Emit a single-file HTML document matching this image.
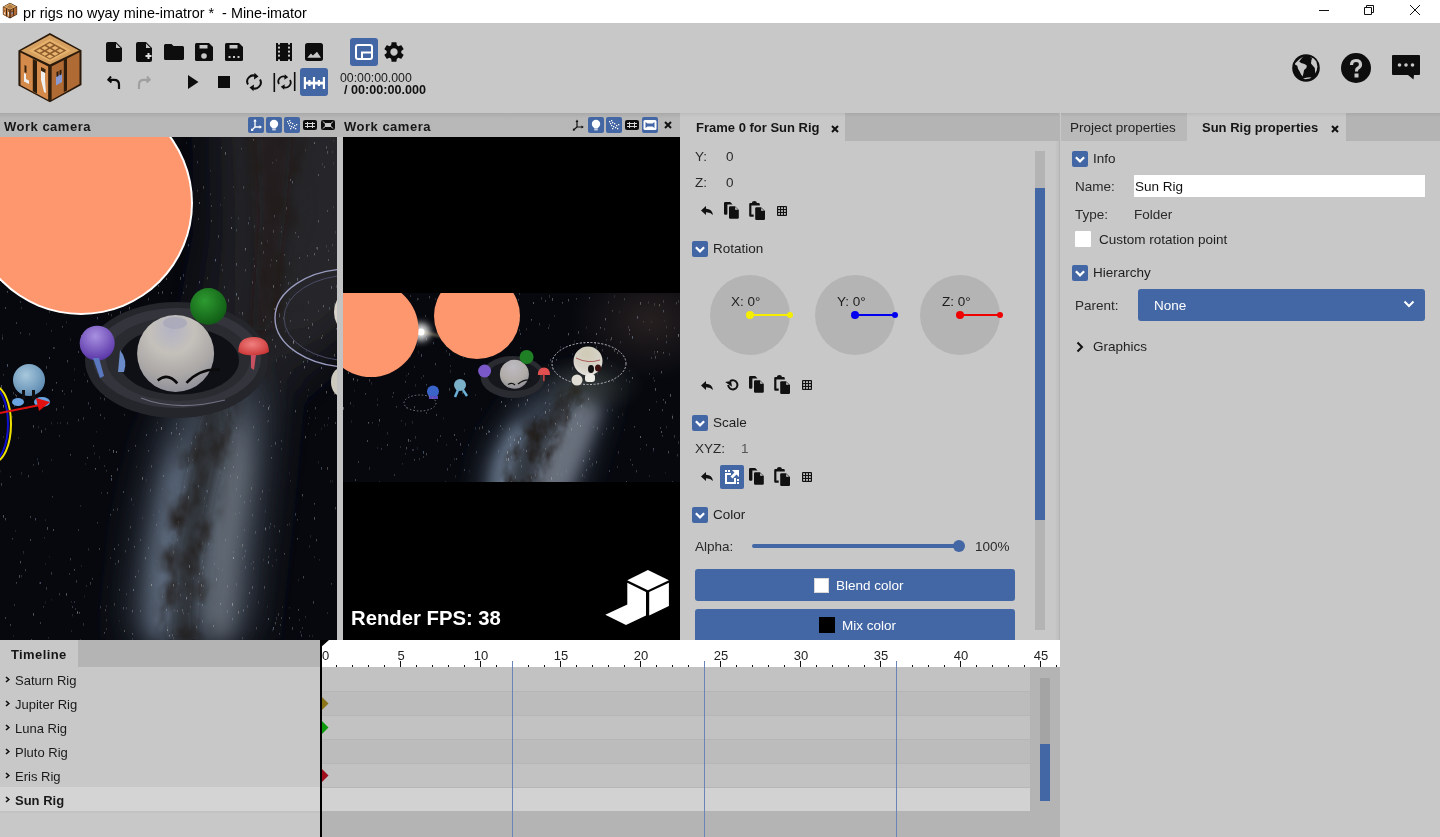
<!DOCTYPE html>
<html><head><meta charset="utf-8">
<style>
*{margin:0;padding:0;box-sizing:border-box}
html,body{width:1440px;height:837px;overflow:hidden;background:#c8c8c8;font-family:"Liberation Sans",sans-serif;color:#1a1a1a}
.a{position:absolute}
.t{position:absolute;white-space:nowrap;will-change:transform}
</style></head><body>
<!-- TITLE BAR -->
<div class="a" style="left:0;top:0;width:1440px;height:23px;background:#fff"></div>
<svg class="a" style="left:2px;top:2px" width="16" height="17" viewBox="15 30 70 75">
 <path d="M49.9 33 L81.5 50.3 L81.5 85 L49.9 102.3 L18.4 85.5 L18.4 50.6Z" fill="#2a1a0c"/>
 <path d="M49.9 35 L79 50.6 L49.9 64.5 L21 50.8Z" fill="#d6a060"/>
 <path d="M49.9 39 L71 50.6 L49.9 61.5 L29 50.8Z" fill="#e6b26c"/>
 <path d="M49.9 41.5 L66.5 50.6 L49.9 59.5 L33.5 50.8Z" fill="#8a5a2c"/>
 <g fill="#e8b46e">
  <path d="M49.9 43 L53.4 45 L49.9 47 L46.4 45Z"/><path d="M55 45.9 L58.5 47.9 L55 49.9 L51.5 47.9Z"/><path d="M60.1 48.8 L63.6 50.8 L60.1 52.8 L56.6 50.8Z"/>
  <path d="M44.8 45.9 L48.3 47.9 L44.8 49.9 L41.3 47.9Z"/><path d="M49.9 48.8 L53.4 50.8 L49.9 52.8 L46.4 50.8Z"/><path d="M55 51.7 L58.5 53.7 L55 55.7 L51.5 53.7Z"/>
  <path d="M39.7 48.8 L43.2 50.8 L39.7 52.8 L36.2 50.8Z"/><path d="M44.8 51.7 L48.3 53.7 L44.8 55.7 L41.3 53.7Z"/><path d="M49.9 54.6 L53.4 56.6 L49.9 58.6 L46.4 56.6Z"/>
 </g>
 <path d="M20.5 52.5 L48.4 66.5 L48.4 100 L20.5 85Z" fill="#d48a4a"/>
 <path d="M51.4 66.5 L79.5 52.2 L79.5 84 L51.4 100Z" fill="#b06a34"/>
 <path d="M32.8 59 L37 61 L37 93.5 L32.8 91.3Z" fill="#2e1c0c"/>
 <path d="M63.8 59.5 L67 58 L67 90.5 L63.8 92Z" fill="#2e1c0c"/>
 <path d="M48.4 65.5 L51.4 65.5 L51.4 101 L48.4 101Z" fill="#2e1c0c"/>
 <path d="M24 73 L26 74 L26 79 L29 80.5 L29 84 L24 81.5Z" fill="#f0f0f0"/>
 <path d="M24.5 65 L26.5 66 L26.5 73 L24.5 72Z" fill="#3a2410"/>
 <path d="M41 70.5 L45 72.5 L45 80 L46 93 L44 92 L41 80Z" fill="#f0f0f0"/>
 <path d="M41 67 L45.5 69.3 L45.5 73 L41 70.7Z" fill="#3a2410"/>
 <path d="M56 76 L62 73 L62 82 L56 85.5Z" fill="#8a9ad0"/>
 <path d="M56.5 72 L58.5 71 L58.5 76 L56.5 77Z M59.5 70.5 L61.5 69.5 L61.5 74.5 L59.5 75.5Z" fill="#2e1c0c"/>
</svg>
<div class="t" style="left:23px;top:4.11px;font-size:14.4px;line-height:18px;color:#000;">pr rigs no wyay mine-imatror *&nbsp; - Mine-imator</div>

<div class="a" style="left:1319px;top:10px;width:10px;height:1px;background:#111"></div>
<svg class="a" style="left:1360px;top:0" width="20" height="20" viewBox="1360 0 20 20"><path d="M1364.5 7.5h7v7h-7z M1366.5 7.5v-2h7v7h-2" fill="none" stroke="#111" stroke-width="1"/></svg>
<svg class="a" style="left:1405px;top:0" width="20" height="20" viewBox="1405 0 20 20"><path d="M1410 5L1420 15M1420 5L1410 15" stroke="#111" stroke-width="1"/></svg>
<!-- TOOLBAR -->
<div class="a" style="left:0;top:23px;width:1440px;height:90px;background:#c8c8c8"></div>
<!-- logo crafting table -->
<svg class="a" style="left:15px;top:30px" width="70" height="75" viewBox="15 30 70 75">
 <path d="M49.9 33 L81.5 50.3 L81.5 85 L49.9 102.3 L18.4 85.5 L18.4 50.6Z" fill="#2a1a0c"/>
 <path d="M49.9 35 L79 50.6 L49.9 64.5 L21 50.8Z" fill="#d6a060"/>
 <path d="M49.9 39 L71 50.6 L49.9 61.5 L29 50.8Z" fill="#e6b26c"/>
 <path d="M49.9 41.5 L66.5 50.6 L49.9 59.5 L33.5 50.8Z" fill="#8a5a2c"/>
 <g fill="#e8b46e">
  <path d="M49.9 43 L53.4 45 L49.9 47 L46.4 45Z"/><path d="M55 45.9 L58.5 47.9 L55 49.9 L51.5 47.9Z"/><path d="M60.1 48.8 L63.6 50.8 L60.1 52.8 L56.6 50.8Z"/>
  <path d="M44.8 45.9 L48.3 47.9 L44.8 49.9 L41.3 47.9Z"/><path d="M49.9 48.8 L53.4 50.8 L49.9 52.8 L46.4 50.8Z"/><path d="M55 51.7 L58.5 53.7 L55 55.7 L51.5 53.7Z"/>
  <path d="M39.7 48.8 L43.2 50.8 L39.7 52.8 L36.2 50.8Z"/><path d="M44.8 51.7 L48.3 53.7 L44.8 55.7 L41.3 53.7Z"/><path d="M49.9 54.6 L53.4 56.6 L49.9 58.6 L46.4 56.6Z"/>
 </g>
 <path d="M20.5 52.5 L48.4 66.5 L48.4 100 L20.5 85Z" fill="#d48a4a"/>
 <path d="M51.4 66.5 L79.5 52.2 L79.5 84 L51.4 100Z" fill="#b06a34"/>
 <path d="M32.8 59 L37 61 L37 93.5 L32.8 91.3Z" fill="#2e1c0c"/>
 <path d="M63.8 59.5 L67 58 L67 90.5 L63.8 92Z" fill="#2e1c0c"/>
 <path d="M48.4 65.5 L51.4 65.5 L51.4 101 L48.4 101Z" fill="#2e1c0c"/>
 <path d="M24 73 L26 74 L26 79 L29 80.5 L29 84 L24 81.5Z" fill="#f0f0f0"/>
 <path d="M24.5 65 L26.5 66 L26.5 73 L24.5 72Z" fill="#3a2410"/>
 <path d="M41 70.5 L45 72.5 L45 80 L46 93 L44 92 L41 80Z" fill="#f0f0f0"/>
 <path d="M41 67 L45.5 69.3 L45.5 73 L41 70.7Z" fill="#3a2410"/>
 <path d="M56 76 L62 73 L62 82 L56 85.5Z" fill="#8a9ad0"/>
 <path d="M56.5 72 L58.5 71 L58.5 76 L56.5 77Z M59.5 70.5 L61.5 69.5 L61.5 74.5 L59.5 75.5Z" fill="#2e1c0c"/>
</svg>
<svg class="a" style="left:106px;top:42px" width="16" height="20" viewBox="0 0 16 20"><path d="M2 0H10L16 6V18Q16 20 14 20H2Q0 20 0 18V2Q0 0 2 0Z" fill="#0d0d0d"/><path d="M10 1.5V6H14.5Z" fill="#c8c8c8"/></svg>
<svg class="a" style="left:136px;top:42px" width="16" height="20" viewBox="0 0 16 20"><path d="M2 0H10L16 6V18Q16 20 14 20H2Q0 20 0 18V2Q0 0 2 0Z" fill="#0d0d0d"/><path d="M10 1.5V6H14.5Z" fill="#c8c8c8"/><path d="M9.5 14h6M12.5 11v6" stroke="#e0e0e0" stroke-width="2"/></svg>
<svg class="a" style="left:164px;top:44px" width="20" height="16" viewBox="0 0 20 16"><path d="M1.5 0H7.5L9.5 2H18.5Q20 2 20 3.5V14.5Q20 16 18.5 16H1.5Q0 16 0 14.5V1.5Q0 0 1.5 0Z" fill="#0d0d0d"/></svg>
<svg class="a" style="left:195px;top:43px" width="18" height="18" viewBox="0 0 18 18"><path d="M1.5 0H14L18 4V16.5Q18 18 16.5 18H1.5Q0 18 0 16.5V1.5Q0 0 1.5 0Z" fill="#0d0d0d"/><rect x="4.5" y="2" width="8" height="3.5" fill="#c8c8c8"/><circle cx="9" cy="13" r="2.8" fill="#c8c8c8"/></svg>
<svg class="a" style="left:225px;top:43px" width="18" height="18" viewBox="0 0 18 18"><path d="M1.5 0H14L18 4V16.5Q18 18 16.5 18H1.5Q0 18 0 16.5V1.5Q0 0 1.5 0Z" fill="#0d0d0d"/><rect x="4.5" y="2" width="8" height="3.5" fill="#c8c8c8"/><rect x="3.5" y="13" width="2" height="2" fill="#c8c8c8"/><rect x="8" y="13" width="2" height="2" fill="#c8c8c8"/><rect x="12.5" y="13" width="2" height="2" fill="#c8c8c8"/></svg>
<svg class="a" style="left:276px;top:43px" width="16" height="18" viewBox="0 0 16 18"><rect x="0" y="0" width="16" height="18" fill="#0d0d0d"/><g fill="#c8c8c8"><rect x="2" y="0" width="2" height="1.6"/><rect x="2" y="3.6" width="2" height="2"/><rect x="2" y="7.6" width="2" height="2"/><rect x="2" y="11.6" width="2" height="2"/><rect x="2" y="16.4" width="2" height="1.6"/><rect x="12" y="0" width="2" height="1.6"/><rect x="12" y="3.6" width="2" height="2"/><rect x="12" y="7.6" width="2" height="2"/><rect x="12" y="11.6" width="2" height="2"/><rect x="12" y="16.4" width="2" height="1.6"/></g></svg>
<svg class="a" style="left:305px;top:43px" width="18" height="18" viewBox="305 43 18 18"><rect x="305" y="43" width="18" height="18" rx="2.5" fill="#0d0d0d"/><path d="M307.3 57.7L310.9 53.6L312.9 55.6L317 51.8L321 57.7Z" fill="#c8c8c8"/></svg>
<div class="a" style="left:350px;top:38px;width:28px;height:28px;background:#4366a4;border-radius:3px"></div>
<svg class="a" style="left:355px;top:44px" width="18" height="16" viewBox="0 0 18 16"><rect x="1" y="1" width="16" height="14" rx="2" fill="none" stroke="#fff" stroke-width="2"/><path d="M7 15V8.5H17" fill="none" stroke="#fff" stroke-width="2"/></svg>
<svg class="a" style="left:384px;top:42px" width="20" height="20" viewBox="2.2 2.2 19.6 19.6"><path fill="#0d0d0d" d="M19.14 12.94c.04-.3.06-.61.06-.94 0-.32-.02-.64-.07-.94l2.03-1.58c.18-.14.23-.41.12-.61l-1.92-3.32c-.12-.22-.37-.29-.59-.22l-2.39.96c-.5-.38-1.03-.7-1.62-.94l-.36-2.54c-.04-.24-.24-.41-.48-.41h-3.84c-.24 0-.43.17-.47.41l-.36 2.54c-.59.24-1.13.57-1.62.94l-2.39-.96c-.22-.08-.47 0-.59.22L2.74 8.87c-.12.21-.08.47.12.61l2.03 1.58c-.05.3-.09.63-.09.94s.02.64.07.94l-2.03 1.58c-.18.14-.23.41-.12.61l1.92 3.32c.12.22.37.29.59.22l2.39-.96c.5.38 1.03.7 1.62.94l.36 2.54c.05.24.24.41.48.41h3.84c.24 0 .44-.17.47-.41l.36-2.54c.59-.24 1.13-.56 1.62-.94l2.39.96c.22.08.47 0 .59-.22l1.92-3.32c.12-.22.07-.47-.12-.61l-2.01-1.58zM12 15.6c-1.98 0-3.6-1.62-3.6-3.6s1.62-3.6 3.6-3.6 3.6 1.62 3.6 3.6-1.62 3.6-3.6 3.6z"/></svg>
<!-- row 2 -->
<svg class="a" style="left:107px;top:75px" width="14" height="15" viewBox="0 0 14 15"><path d="M4 1.5L1.2 4.8L4.5 7.5" fill="none" stroke="#0d0d0d" stroke-width="2"/><path d="M1.5 4.8H7Q12 4.8 12 9.5V14" fill="none" stroke="#0d0d0d" stroke-width="2.2"/></svg>
<svg class="a" style="left:137px;top:75px" width="14" height="15" viewBox="0 0 14 15"><path d="M10 1.5L12.8 4.8L9.5 7.5" fill="none" stroke="#a0a0a0" stroke-width="2"/><path d="M12.5 4.8H7Q2 4.8 2 9.5V14" fill="none" stroke="#a0a0a0" stroke-width="2.2"/></svg>
<svg class="a" style="left:188px;top:75px" width="11" height="14" viewBox="0 0 11 14"><path d="M0 0L10.5 7L0 14Z" fill="#0d0d0d"/></svg>
<div class="a" style="left:218px;top:76px;width:12px;height:12px;background:#0d0d0d"></div>
<svg class="a" style="left:245px;top:72px" width="18" height="20" viewBox="0 0 18 20"><path d="M3 12.5A6 6 0 0 1 11 4.2" fill="none" stroke="#0d0d0d" stroke-width="2"/><path d="M9.5 0.8L13.5 4.5L9 7.5Z" fill="#0d0d0d"/><path d="M15 7.5A6 6 0 0 1 7 15.8" fill="none" stroke="#0d0d0d" stroke-width="2"/><path d="M8.5 19.2L4.5 15.5L9 12.5Z" fill="#0d0d0d"/></svg>
<svg class="a" style="left:273px;top:72px" width="23" height="20" viewBox="0 0 23 20"><rect x="0.5" y="1" width="1.6" height="19" fill="#0d0d0d"/><rect x="20.9" y="0" width="1.6" height="19" fill="#0d0d0d"/><path d="M6 12A5 5 0 0 1 13 5.3" fill="none" stroke="#0d0d0d" stroke-width="1.8"/><path d="M11.8 2.3L15.2 5.3L11.3 7.8Z" fill="#0d0d0d"/><path d="M17 8A5 5 0 0 1 10 14.7" fill="none" stroke="#0d0d0d" stroke-width="1.8"/><path d="M11.2 17.7L7.8 14.7L11.7 12.2Z" fill="#0d0d0d"/></svg>
<div class="a" style="left:300px;top:68px;width:28px;height:28px;background:#4366a4;border-radius:3px"></div>
<svg class="a" style="left:300px;top:68px" width="28" height="28" viewBox="300 68 28 28"><g fill="#fff"><rect x="303.8" y="77" width="2.2" height="12"/><rect x="322.8" y="77" width="2.2" height="12"/><rect x="312.9" y="77" width="2.2" height="12"/><rect x="308.3" y="80" width="2.2" height="6"/><rect x="317.8" y="80" width="2.2" height="6"/><rect x="304" y="81.7" width="21" height="2.8"/></g></svg>
<div class="t" style="left:340px;top:70.74px;font-size:12.3px;line-height:15px;color:#1a1a1a;">00:00:00.000</div>

<div class="t" style="left:344px;top:82.33px;font-size:12.6px;line-height:16px;font-weight:bold;color:#111;">/ 00:00:00.000</div>

<!-- right icons -->
<svg class="a" style="left:1290px;top:52px" width="32" height="32" viewBox="0 0 32 32"><circle cx="16" cy="16" r="13.8" fill="#0d0d0d"/><g fill="#c8c8c8"><path d="M5.4 11.1L9.6 6.9L13.4 4.4L11.5 6.5L9.2 9.6L11.1 11.1L14.5 11.9L16.8 13.4L16.4 16.1L14.1 18L13.4 21.4L12.6 24.5L11.1 22.6L9.9 19.9L8 16.8L7.3 13.8L5 12.4Q4.8 11.8 5.4 11.1Z"/><path d="M19.9 4.9L22.2 6.5L21.4 8L21 11.5L22.9 13.8L24.8 16.1L25.2 21.4L26.8 18.3L27.4 14.5L26.4 9.6L23.7 6.5Z"/><path d="M13 26.6L17.2 25.6L21.4 25.2L19.9 26.6L15.3 27.3Z"/></g></svg>
<svg class="a" style="left:1341px;top:53px" width="30" height="30" viewBox="0 0 30 30"><circle cx="15" cy="15" r="15" fill="#0d0d0d"/><path d="M10.5 12Q10.5 7.5 15 7.5Q19.5 7.5 19.5 11.5Q19.5 14 16.5 15.5Q15.5 16 15.5 18.5" fill="none" stroke="#c8c8c8" stroke-width="3.2"/><rect x="13.5" y="20.5" width="4" height="4" fill="#c8c8c8"/></svg>
<svg class="a" style="left:1392px;top:55px" width="28" height="25" viewBox="0 0 28 25"><path d="M1 0H27Q28 0 28 1V19Q28 20 27 20H22L21.5 24.5L16 20H1Q0 20 0 19V1Q0 0 1 0Z" fill="#0d0d0d"/><circle cx="7.5" cy="10" r="1.8" fill="#c8c8c8"/><circle cx="14" cy="10" r="1.8" fill="#c8c8c8"/><circle cx="20.5" cy="10" r="1.8" fill="#c8c8c8"/></svg>
<!-- PANEL HEADERS -->
<div class="a" style="left:0;top:113px;width:680px;height:24px;background:linear-gradient(#a9a9a9,#b7b7b7 5px,#b8b8b8)"></div>
<div class="t" style="left:4.2px;top:119.10px;font-size:13px;line-height:16px;font-weight:bold;letter-spacing:0.5px;color:#161616;">Work camera</div>

<div class="t" style="left:344px;top:119.10px;font-size:13px;line-height:16px;font-weight:bold;letter-spacing:0.5px;color:#161616;">Work camera</div>

<!-- vp1 header icons -->
<div class="a" style="left:248px;top:117px;width:16px;height:16px;background:#4366a4;border-radius:2px"></div>
<svg class="a" style="left:248px;top:117px" width="16" height="16" viewBox="0 0 16 16"><path d="M7 3V10H13M7 10L3.5 13.5" stroke="#fff" stroke-width="1.3" fill="none"/><path d="M7 2L5.3 4.5H8.7Z M14 10L11.5 8.3V11.7Z M3 14L3.3 11.3L5.7 13.7Z" fill="#fff"/></svg>
<div class="a" style="left:266px;top:117px;width:16px;height:16px;background:#4366a4;border-radius:2px"></div>
<svg class="a" style="left:266px;top:117px" width="16" height="16" viewBox="0 0 16 16"><circle cx="8" cy="7" r="4.2" fill="#fff"/><rect x="6.2" y="9" width="3.6" height="2.5" fill="#fff"/><rect x="6.2" y="12.3" width="3.6" height="1" fill="#fff"/></svg>
<div class="a" style="left:284px;top:117px;width:16px;height:16px;background:#4366a4;border-radius:2px"></div>
<svg class="a" style="left:284px;top:117px" width="16" height="16" viewBox="0 0 16 16"><g fill="#fff"><rect x="3" y="4" width="1.3" height="1.3"/><rect x="5" y="3" width="1.3" height="1.3"/><rect x="4" y="6" width="1.3" height="1.3"/><rect x="6" y="5" width="1.3" height="1.3"/><rect x="8" y="6" width="1.3" height="1.3"/><rect x="5" y="8" width="1.3" height="1.3"/><rect x="7" y="9" width="1.3" height="1.3"/><rect x="10" y="8" width="1.3" height="1.3"/><rect x="9" y="10" width="1.3" height="1.3"/><rect x="11" y="11" width="1.3" height="1.3"/><rect x="6" y="11" width="1.3" height="1.3"/><rect x="12" y="7" width="1.3" height="1.3"/></g></svg>
<svg class="a" style="left:303px;top:119px" width="15" height="12" viewBox="0 0 15 12"><rect x="0" y="1" width="14" height="10" rx="2" fill="#0d0d0d"/><path d="M4.5 3V9M9.5 3V9M2 4.5H12M2 7.5H12" stroke="#d8d8d8" stroke-width="1"/></svg>
<svg class="a" style="left:321px;top:119px" width="15" height="12" viewBox="0 0 15 12"><rect x="0" y="1" width="14" height="10" rx="2" fill="#0d0d0d"/><path d="M1.8 2.6L4 4.2M12.2 2.6L10 4.2M1.8 9.4L4 7.8M12.2 9.4L10 7.8" stroke="#d0d0d0" stroke-width="0.9"/><path d="M3.6 4H10.4Q9.6 6 10.4 8H3.6Q4.4 6 3.6 4Z" fill="#c8c8c8"/></svg>
<!-- vp2 header icons -->
<svg class="a" style="left:572px;top:119px" width="12" height="12" viewBox="0 0 12 12"><path d="M5 2V8H11M5 8L1.5 11" stroke="#111" stroke-width="1.2" fill="none"/><path d="M5 0.5L3.5 3H6.5Z M11.8 8L9.5 6.5V9.5Z M0.8 11.8L1 9.3L3.3 11.3Z" fill="#111"/></svg>
<div class="a" style="left:588px;top:117px;width:16px;height:16px;background:#4366a4;border-radius:2px"></div>
<svg class="a" style="left:588px;top:117px" width="16" height="16" viewBox="0 0 16 16"><circle cx="8" cy="7" r="4.2" fill="#fff"/><rect x="6.2" y="9" width="3.6" height="2.5" fill="#fff"/><rect x="6.2" y="12.3" width="3.6" height="1" fill="#fff"/></svg>
<div class="a" style="left:606px;top:117px;width:16px;height:16px;background:#4366a4;border-radius:2px"></div>
<svg class="a" style="left:606px;top:117px" width="16" height="16" viewBox="0 0 16 16"><g fill="#fff"><rect x="3" y="4" width="1.3" height="1.3"/><rect x="5" y="3" width="1.3" height="1.3"/><rect x="4" y="6" width="1.3" height="1.3"/><rect x="6" y="5" width="1.3" height="1.3"/><rect x="8" y="6" width="1.3" height="1.3"/><rect x="5" y="8" width="1.3" height="1.3"/><rect x="7" y="9" width="1.3" height="1.3"/><rect x="10" y="8" width="1.3" height="1.3"/><rect x="9" y="10" width="1.3" height="1.3"/><rect x="11" y="11" width="1.3" height="1.3"/><rect x="6" y="11" width="1.3" height="1.3"/><rect x="12" y="7" width="1.3" height="1.3"/></g></svg>
<svg class="a" style="left:625px;top:119px" width="15" height="12" viewBox="0 0 15 12"><rect x="0" y="1" width="14" height="10" rx="2" fill="#0d0d0d"/><path d="M4.5 3V9M9.5 3V9M2 4.5H12M2 7.5H12" stroke="#d8d8d8" stroke-width="1"/></svg>
<div class="a" style="left:642px;top:117px;width:16px;height:16px;background:#4366a4;border-radius:2px"></div>
<svg class="a" style="left:642px;top:117px" width="16" height="16" viewBox="0 0 16 16"><rect x="1.5" y="3" width="13" height="10" rx="1.5" fill="#fff"/><path d="M3.5 5L5.5 6.5H10.5L12.5 5V11L10.5 9.5H5.5L3.5 11Z" fill="#4366a4"/></svg>
<svg class="a" style="left:664px;top:121px" width="8" height="8" viewBox="0 0 8 8"><path d="M1 1L7 7M7 1L1 7" stroke="#111" stroke-width="2"/></svg>
<!-- divider -->
<div class="a" style="left:337px;top:137px;width:6px;height:503px;background:#c3c3c3"></div>

<!-- VIEWPORT 1 -->
<div class="a" style="left:0;top:137px;width:337px;height:503px;overflow:hidden;background:#06080e">
<svg width="337" height="503" viewBox="0 137 337 503">
 <defs>
  <filter id="b24" filterUnits="userSpaceOnUse" x="-200" y="0" width="1100" height="900"><feGaussianBlur stdDeviation="22"/></filter>
  <filter id="b12" filterUnits="userSpaceOnUse" x="-200" y="0" width="1100" height="900"><feGaussianBlur stdDeviation="11"/></filter>
  <filter id="dust1" color-interpolation-filters="sRGB" filterUnits="userSpaceOnUse" x="0" y="100" width="400" height="560"><feGaussianBlur in="SourceGraphic" stdDeviation="7" result="m"/><feTurbulence type="fractalNoise" baseFrequency="0.045 0.03" numOctaves="3" seed="4" result="n"/><feColorMatrix in="n" type="matrix" values="0 0 0 0 0.13 0 0 0 0 0.11 0 0 0 0 0.10 0 0 0 2.3 -0.9" result="d"/><feComposite in="d" in2="m" operator="in"/></filter>
  <filter id="b6" filterUnits="userSpaceOnUse" x="-200" y="0" width="1100" height="900"><feGaussianBlur stdDeviation="6"/></filter>
  <radialGradient id="sat" cx="45%" cy="20%" r="85%"><stop offset="0" stop-color="#b4b4c4"/><stop offset="0.35" stop-color="#c4c0ba"/><stop offset="0.7" stop-color="#aaa7a6"/><stop offset="1" stop-color="#8a8a96"/></radialGradient>
  <radialGradient id="grn" cx="40%" cy="35%" r="70%"><stop offset="0" stop-color="#2e9a30"/><stop offset="1" stop-color="#0f5a14"/></radialGradient>
  <radialGradient id="pur" cx="45%" cy="30%" r="70%"><stop offset="0" stop-color="#a890e0"/><stop offset="1" stop-color="#5a36a8"/></radialGradient>
  <radialGradient id="red" cx="45%" cy="40%" r="70%"><stop offset="0" stop-color="#f08080"/><stop offset="1" stop-color="#c83030"/></radialGradient>
  <radialGradient id="lbl" cx="40%" cy="35%" r="70%"><stop offset="0" stop-color="#a8c8dc"/><stop offset="1" stop-color="#5a88b0"/></radialGradient>
 </defs>
 <!-- milky way -->
 <g filter="url(#b24)">
  <path d="M215 60 L380 60 L380 300 L280 400 L255 639 L125 639 L150 480 L195 330 L215 230Z" fill="#1c1e24"/>
  <path d="M225 90 L380 90 L380 300 L320 350 L250 340 L235 220Z" fill="#26282b"/>
  <path d="M140 639 L150 520 L172 430 L212 385 L258 395 L250 500 L236 639Z" fill="#46515f"/>
 </g>
 <g filter="url(#b12)">
  <path d="M148 639 L152 560 L166 480 L180 440 L188 470 L180 560 L176 639Z" fill="#6a7a90" opacity="0.8"/>
  <path d="M205 639 L210 540 L225 450 L245 410 L250 470 L238 560 L232 639Z" fill="#707882" opacity="0.75"/>
 </g>
 <g filter="url(#b6)">
  <path d="M170 639 L174 560 L188 480 L204 420 L222 380 L226 430 L210 500 L196 580 L194 639Z" fill="#201c1c" opacity="0.6"/>
  <path d="M255 90 L295 90 L285 220 L270 330 L252 330 L260 220Z" fill="#221818" opacity="0.5"/>
 </g>
 <g filter="url(#dust1)">
  <path d="M158 639 L162 560 L176 480 L196 410 L225 370 L240 400 L222 480 L208 560 L206 639Z" fill="#000"/>
  <path d="M240 90 L310 90 L300 220 L285 340 L245 340 L250 220Z" fill="#000"/>
 </g>
 <rect x="45" y="563" width="1" height="1.6" fill="rgb(118,134,158)" opacity="0.19"/><rect x="151" y="465" width="1" height="2.8" fill="rgb(176,176,176)" opacity="0.28"/><rect x="282" y="355" width="1" height="2.4" fill="rgb(150,142,135)" opacity="0.23"/><rect x="77" y="612" width="1" height="1.6" fill="rgb(190,190,190)" opacity="0.30"/><rect x="182" y="609" width="1" height="2.8" fill="rgb(158,174,198)" opacity="0.31"/><rect x="178" y="521" width="1" height="2.4" fill="rgb(170,187,213)" opacity="0.14"/><rect x="74" y="368" width="1" height="2.8" fill="rgb(187,187,187)" opacity="0.12"/><rect x="188" y="460" width="1" height="1.6" fill="rgb(129,147,173)" opacity="0.37"/><rect x="302" y="627" width="1" height="2.0" fill="rgb(214,203,192)" opacity="0.20"/><rect x="198" y="581" width="1" height="1.6" fill="rgb(214,203,192)" opacity="0.19"/><rect x="251" y="340" width="1" height="2.4" fill="rgb(188,206,235)" opacity="0.42"/><rect x="237" y="476" width="1" height="2.8" fill="rgb(197,197,197)" opacity="0.26"/><rect x="36" y="219" width="1" height="2.8" fill="rgb(150,170,200)" opacity="0.37"/><rect x="158" y="292" width="1" height="2.0" fill="rgb(228,216,205)" opacity="0.26"/><rect x="76" y="143" width="1" height="2.8" fill="rgb(140,154,175)" opacity="0.31"/><rect x="321" y="428" width="1" height="1.6" fill="rgb(156,176,208)" opacity="0.17"/><rect x="289" y="617" width="1" height="2.0" fill="rgb(172,189,215)" opacity="0.31"/><rect x="19" y="575" width="1" height="2.8" fill="rgb(177,195,222)" opacity="0.38"/><rect x="120" y="311" width="1" height="2.8" fill="rgb(163,185,218)" opacity="0.28"/><rect x="271" y="457" width="1" height="1.6" fill="rgb(176,193,220)" opacity="0.34"/><rect x="269" y="548" width="1" height="1.6" fill="rgb(182,182,182)" opacity="0.32"/><rect x="6" y="144" width="1" height="2.4" fill="rgb(148,162,185)" opacity="0.14"/><rect x="211" y="310" width="1" height="2.0" fill="rgb(126,139,158)" opacity="0.35"/><rect x="321" y="467" width="1" height="2.8" fill="rgb(174,197,232)" opacity="0.30"/><rect x="167" y="194" width="1" height="2.4" fill="rgb(189,179,170)" opacity="0.21"/><rect x="63" y="192" width="1" height="2.8" fill="rgb(172,189,215)" opacity="0.13"/><rect x="7" y="146" width="1" height="2.0" fill="rgb(168,168,168)" opacity="0.38"/><rect x="171" y="352" width="1" height="2.0" fill="rgb(178,169,160)" opacity="0.26"/><rect x="10" y="476" width="1" height="1.6" fill="rgb(191,181,171)" opacity="0.34"/><rect x="42" y="244" width="1" height="1.6" fill="rgb(117,132,156)" opacity="0.38"/><rect x="105" y="609" width="1" height="2.4" fill="rgb(170,161,153)" opacity="0.33"/><rect x="189" y="565" width="1" height="2.8" fill="rgb(180,198,225)" opacity="0.40"/><rect x="292" y="627" width="1" height="2.8" fill="rgb(240,240,240)" opacity="0.24"/><rect x="33" y="425" width="1" height="2.8" fill="rgb(164,180,205)" opacity="0.36"/><rect x="224" y="286" width="1" height="2.4" fill="rgb(213,213,213)" opacity="0.25"/><rect x="136" y="279" width="1" height="2.4" fill="rgb(136,149,170)" opacity="0.40"/><rect x="190" y="205" width="1" height="2.4" fill="rgb(163,179,204)" opacity="0.38"/><rect x="282" y="606" width="1" height="2.0" fill="rgb(194,184,174)" opacity="0.15"/><rect x="14" y="204" width="1" height="2.4" fill="rgb(136,150,171)" opacity="0.16"/><rect x="202" y="560" width="1" height="2.4" fill="rgb(147,167,197)" opacity="0.19"/><rect x="79" y="612" width="1" height="1.6" fill="rgb(169,186,212)" opacity="0.41"/><rect x="137" y="328" width="1" height="2.4" fill="rgb(134,147,168)" opacity="0.25"/><rect x="198" y="603" width="1" height="1.6" fill="rgb(127,139,159)" opacity="0.31"/><rect x="123" y="286" width="1" height="2.8" fill="rgb(218,218,218)" opacity="0.21"/><rect x="36" y="160" width="1" height="1.6" fill="rgb(187,187,187)" opacity="0.27"/><rect x="39" y="582" width="1" height="2.0" fill="rgb(124,136,155)" opacity="0.24"/><rect x="198" y="218" width="1" height="2.0" fill="rgb(165,182,207)" opacity="0.23"/><rect x="285" y="356" width="1" height="2.4" fill="rgb(148,168,198)" opacity="0.30"/><rect x="106" y="241" width="1" height="1.6" fill="rgb(190,190,190)" opacity="0.30"/><rect x="331" y="286" width="1" height="2.8" fill="rgb(169,192,226)" opacity="0.39"/><rect x="134" y="169" width="1" height="1.6" fill="rgb(190,180,171)" opacity="0.32"/><rect x="265" y="528" width="1" height="2.4" fill="rgb(219,208,197)" opacity="0.40"/><rect x="183" y="292" width="1" height="1.6" fill="rgb(135,153,181)" opacity="0.38"/><rect x="30" y="516" width="1" height="2.0" fill="rgb(120,136,161)" opacity="0.42"/><rect x="103" y="302" width="1" height="2.0" fill="rgb(142,161,190)" opacity="0.32"/><rect x="183" y="428" width="1" height="2.0" fill="rgb(226,226,226)" opacity="0.17"/><rect x="272" y="339" width="1" height="1.6" fill="rgb(184,184,184)" opacity="0.38"/><rect x="3" y="515" width="1" height="2.8" fill="rgb(195,185,175)" opacity="0.41"/><rect x="52" y="389" width="1" height="2.0" fill="rgb(191,191,191)" opacity="0.39"/><rect x="50" y="208" width="1" height="1.6" fill="rgb(142,161,190)" opacity="0.29"/><rect x="281" y="440" width="1" height="2.0" fill="rgb(132,146,166)" opacity="0.33"/><rect x="244" y="529" width="1" height="2.0" fill="rgb(183,201,229)" opacity="0.18"/><rect x="181" y="161" width="1" height="2.4" fill="rgb(188,206,235)" opacity="0.37"/><rect x="230" y="362" width="1" height="2.8" fill="rgb(153,174,205)" opacity="0.29"/><rect x="153" y="336" width="1" height="2.4" fill="rgb(154,169,193)" opacity="0.21"/><rect x="267" y="606" width="1" height="1.6" fill="rgb(223,223,223)" opacity="0.14"/><rect x="195" y="436" width="1" height="2.4" fill="rgb(125,141,167)" opacity="0.38"/><rect x="135" y="445" width="1" height="1.6" fill="rgb(179,170,161)" opacity="0.42"/><rect x="107" y="586" width="1" height="2.0" fill="rgb(164,181,206)" opacity="0.15"/><rect x="232" y="618" width="1" height="2.4" fill="rgb(151,171,202)" opacity="0.36"/><rect x="74" y="601" width="1" height="2.0" fill="rgb(161,182,215)" opacity="0.24"/><rect x="267" y="240" width="1" height="2.4" fill="rgb(141,159,188)" opacity="0.17"/><rect x="236" y="371" width="1" height="2.8" fill="rgb(160,160,160)" opacity="0.21"/><rect x="84" y="246" width="1" height="2.8" fill="rgb(222,222,222)" opacity="0.35"/><rect x="242" y="312" width="1" height="1.6" fill="rgb(172,189,215)" opacity="0.38"/><rect x="30" y="265" width="1" height="1.6" fill="rgb(121,137,162)" opacity="0.13"/><rect x="47" y="527" width="1" height="2.8" fill="rgb(234,234,234)" opacity="0.30"/><rect x="81" y="565" width="1" height="2.0" fill="rgb(205,194,184)" opacity="0.13"/><rect x="148" y="450" width="1" height="1.6" fill="rgb(169,186,212)" opacity="0.34"/><rect x="180" y="594" width="1" height="2.4" fill="rgb(175,198,234)" opacity="0.22"/><rect x="253" y="139" width="1" height="1.6" fill="rgb(174,165,156)" opacity="0.38"/><rect x="328" y="259" width="1" height="2.0" fill="rgb(146,161,183)" opacity="0.41"/><rect x="183" y="274" width="1" height="2.8" fill="rgb(168,190,224)" opacity="0.27"/><rect x="273" y="627" width="1" height="2.8" fill="rgb(164,186,219)" opacity="0.42"/><rect x="41" y="242" width="1" height="2.4" fill="rgb(159,175,199)" opacity="0.21"/><rect x="305" y="149" width="1" height="2.4" fill="rgb(222,222,222)" opacity="0.14"/><rect x="256" y="627" width="1" height="2.4" fill="rgb(167,167,167)" opacity="0.30"/><rect x="105" y="390" width="1" height="1.6" fill="rgb(146,165,195)" opacity="0.13"/><rect x="242" y="313" width="1" height="2.4" fill="rgb(219,208,197)" opacity="0.18"/><rect x="230" y="385" width="1" height="2.8" fill="rgb(232,220,208)" opacity="0.24"/><rect x="1" y="277" width="1" height="2.8" fill="rgb(180,198,226)" opacity="0.30"/><rect x="174" y="609" width="1" height="2.8" fill="rgb(151,166,189)" opacity="0.17"/><rect x="179" y="318" width="1" height="2.8" fill="rgb(150,142,135)" opacity="0.13"/><rect x="113" y="450" width="1" height="2.8" fill="rgb(239,239,239)" opacity="0.38"/><rect x="83" y="623" width="1" height="2.8" fill="rgb(187,187,187)" opacity="0.21"/><rect x="53" y="529" width="1" height="2.0" fill="rgb(150,170,200)" opacity="0.41"/><rect x="275" y="442" width="1" height="2.8" fill="rgb(145,164,194)" opacity="0.39"/><rect x="183" y="213" width="1" height="2.0" fill="rgb(183,173,164)" opacity="0.23"/><rect x="15" y="394" width="1" height="1.6" fill="rgb(225,213,202)" opacity="0.26"/><rect x="221" y="147" width="1" height="1.6" fill="rgb(171,188,214)" opacity="0.28"/><rect x="232" y="441" width="1" height="2.0" fill="rgb(140,154,176)" opacity="0.31"/><rect x="91" y="175" width="1" height="2.8" fill="rgb(162,183,216)" opacity="0.30"/><rect x="248" y="222" width="1" height="2.4" fill="rgb(174,198,233)" opacity="0.29"/><rect x="78" y="419" width="1" height="2.4" fill="rgb(172,163,154)" opacity="0.31"/><rect x="111" y="249" width="1" height="1.6" fill="rgb(182,200,228)" opacity="0.40"/><rect x="293" y="340" width="1" height="2.4" fill="rgb(164,180,205)" opacity="0.27"/><rect x="211" y="220" width="1" height="2.0" fill="rgb(224,212,201)" opacity="0.25"/><rect x="88" y="402" width="1" height="2.8" fill="rgb(133,146,167)" opacity="0.34"/><rect x="253" y="258" width="1" height="1.6" fill="rgb(132,149,176)" opacity="0.19"/><rect x="134" y="385" width="1" height="1.6" fill="rgb(129,142,162)" opacity="0.21"/><rect x="201" y="584" width="1" height="2.8" fill="rgb(177,177,177)" opacity="0.41"/><rect x="275" y="622" width="1" height="2.4" fill="rgb(228,216,205)" opacity="0.28"/><rect x="93" y="445" width="1" height="2.0" fill="rgb(172,172,172)" opacity="0.28"/><rect x="167" y="327" width="1" height="2.0" fill="rgb(136,150,171)" opacity="0.12"/><rect x="156" y="429" width="1" height="2.4" fill="rgb(177,168,159)" opacity="0.24"/><rect x="200" y="594" width="1" height="1.6" fill="rgb(160,160,160)" opacity="0.29"/><rect x="289" y="298" width="1" height="2.0" fill="rgb(149,169,199)" opacity="0.13"/><rect x="297" y="519" width="1" height="1.6" fill="rgb(169,169,169)" opacity="0.30"/><rect x="295" y="410" width="1" height="2.4" fill="rgb(222,210,199)" opacity="0.31"/><rect x="156" y="560" width="1" height="1.6" fill="rgb(151,151,151)" opacity="0.14"/><rect x="43" y="606" width="1" height="1.6" fill="rgb(165,156,148)" opacity="0.31"/><rect x="168" y="203" width="1" height="2.8" fill="rgb(148,162,185)" opacity="0.26"/><rect x="213" y="625" width="1" height="2.0" fill="rgb(185,204,232)" opacity="0.32"/><rect x="315" y="434" width="1" height="1.6" fill="rgb(194,184,174)" opacity="0.23"/><rect x="184" y="408" width="1" height="1.6" fill="rgb(218,207,196)" opacity="0.33"/><rect x="250" y="500" width="1" height="2.0" fill="rgb(119,135,159)" opacity="0.34"/><rect x="51" y="599" width="1" height="1.6" fill="rgb(204,204,204)" opacity="0.13"/><rect x="307" y="395" width="1" height="1.6" fill="rgb(160,181,214)" opacity="0.14"/><rect x="14" y="404" width="1" height="2.8" fill="rgb(164,181,206)" opacity="0.32"/><rect x="303" y="361" width="1" height="1.6" fill="rgb(162,184,217)" opacity="0.41"/><rect x="110" y="289" width="1" height="2.4" fill="rgb(199,199,199)" opacity="0.20"/><rect x="44" y="537" width="1" height="1.6" fill="rgb(123,139,164)" opacity="0.26"/><rect x="83" y="417" width="1" height="2.8" fill="rgb(144,163,192)" opacity="0.30"/><rect x="197" y="190" width="1" height="1.6" fill="rgb(233,221,209)" opacity="0.22"/><rect x="280" y="284" width="1" height="2.4" fill="rgb(136,149,170)" opacity="0.23"/><rect x="109" y="343" width="1" height="1.6" fill="rgb(166,166,166)" opacity="0.21"/><rect x="269" y="405" width="1" height="2.4" fill="rgb(152,172,203)" opacity="0.23"/><rect x="110" y="514" width="1" height="1.6" fill="rgb(214,214,214)" opacity="0.30"/><rect x="308" y="301" width="1" height="2.8" fill="rgb(191,191,191)" opacity="0.21"/><rect x="162" y="596" width="1" height="1.6" fill="rgb(198,198,198)" opacity="0.23"/><rect x="176" y="427" width="1" height="2.4" fill="rgb(145,160,182)" opacity="0.35"/><rect x="318" y="461" width="1" height="2.8" fill="rgb(150,170,201)" opacity="0.13"/><rect x="115" y="392" width="1" height="2.4" fill="rgb(122,134,153)" opacity="0.29"/><rect x="190" y="593" width="1" height="1.6" fill="rgb(173,164,155)" opacity="0.34"/><rect x="330" y="480" width="1" height="2.4" fill="rgb(130,143,163)" opacity="0.21"/><rect x="192" y="459" width="1" height="2.0" fill="rgb(127,139,159)" opacity="0.19"/><rect x="146" y="434" width="1" height="2.0" fill="rgb(159,180,212)" opacity="0.36"/><rect x="202" y="572" width="1" height="2.8" fill="rgb(180,171,162)" opacity="0.19"/><rect x="183" y="612" width="1" height="2.4" fill="rgb(211,211,211)" opacity="0.18"/><rect x="3" y="405" width="1" height="1.6" fill="rgb(198,188,178)" opacity="0.25"/><rect x="297" y="538" width="1" height="1.6" fill="rgb(224,212,201)" opacity="0.33"/><rect x="333" y="140" width="1" height="1.6" fill="rgb(188,188,188)" opacity="0.15"/><rect x="173" y="637" width="1" height="2.8" fill="rgb(142,161,190)" opacity="0.22"/><rect x="276" y="617" width="1" height="2.8" fill="rgb(151,171,202)" opacity="0.22"/><rect x="171" y="432" width="1" height="2.4" fill="rgb(176,193,220)" opacity="0.37"/><rect x="335" y="507" width="1" height="2.4" fill="rgb(222,222,222)" opacity="0.25"/><rect x="95" y="468" width="1" height="1.6" fill="rgb(235,235,235)" opacity="0.38"/><rect x="285" y="330" width="1" height="2.4" fill="rgb(156,177,209)" opacity="0.17"/><rect x="287" y="524" width="1" height="1.6" fill="rgb(199,189,179)" opacity="0.22"/><rect x="49" y="212" width="1" height="2.4" fill="rgb(129,146,172)" opacity="0.32"/><rect x="199" y="281" width="1" height="2.4" fill="rgb(151,171,202)" opacity="0.39"/><rect x="233" y="355" width="1" height="2.8" fill="rgb(169,186,212)" opacity="0.26"/><rect x="135" y="351" width="1" height="2.0" fill="rgb(126,139,158)" opacity="0.19"/><rect x="77" y="150" width="1" height="2.8" fill="rgb(145,160,182)" opacity="0.16"/><rect x="33" y="464" width="1" height="1.6" fill="rgb(173,173,173)" opacity="0.28"/><rect x="322" y="163" width="1" height="2.4" fill="rgb(177,168,159)" opacity="0.18"/><rect x="220" y="603" width="1" height="1.6" fill="rgb(220,209,198)" opacity="0.36"/><rect x="231" y="227" width="1" height="2.0" fill="rgb(240,240,240)" opacity="0.37"/><rect x="29" y="333" width="1" height="2.4" fill="rgb(235,223,211)" opacity="0.18"/><rect x="168" y="335" width="1" height="1.6" fill="rgb(227,215,204)" opacity="0.20"/><rect x="207" y="490" width="1" height="2.8" fill="rgb(128,145,171)" opacity="0.36"/><rect x="315" y="407" width="1" height="2.4" fill="rgb(170,187,213)" opacity="0.31"/><rect x="35" y="518" width="1" height="2.4" fill="rgb(175,198,234)" opacity="0.36"/><rect x="211" y="288" width="1" height="2.4" fill="rgb(129,142,162)" opacity="0.22"/><rect x="83" y="212" width="1" height="2.8" fill="rgb(145,160,182)" opacity="0.16"/><rect x="202" y="620" width="1" height="2.8" fill="rgb(174,191,218)" opacity="0.21"/><rect x="162" y="291" width="1" height="2.8" fill="rgb(169,186,212)" opacity="0.36"/><rect x="159" y="307" width="1" height="2.8" fill="rgb(181,199,227)" opacity="0.20"/><rect x="20" y="301" width="1" height="2.0" fill="rgb(190,209,238)" opacity="0.22"/><rect x="166" y="303" width="1" height="2.4" fill="rgb(132,146,166)" opacity="0.25"/><rect x="214" y="554" width="1" height="1.6" fill="rgb(124,137,156)" opacity="0.25"/><rect x="67" y="422" width="1" height="2.4" fill="rgb(189,179,170)" opacity="0.24"/><rect x="7" y="291" width="1" height="1.6" fill="rgb(182,200,228)" opacity="0.40"/><rect x="94" y="452" width="1" height="2.8" fill="rgb(144,164,193)" opacity="0.17"/><rect x="111" y="207" width="1" height="1.6" fill="rgb(145,160,182)" opacity="0.12"/><rect x="31" y="639" width="1" height="2.0" fill="rgb(141,159,188)" opacity="0.40"/><rect x="17" y="153" width="1" height="2.4" fill="rgb(167,158,150)" opacity="0.38"/><rect x="215" y="259" width="1" height="2.4" fill="rgb(177,200,236)" opacity="0.42"/><rect x="299" y="619" width="1" height="2.0" fill="rgb(123,139,164)" opacity="0.25"/><rect x="293" y="341" width="1" height="2.8" fill="rgb(236,224,212)" opacity="0.41"/><rect x="133" y="589" width="1" height="2.0" fill="rgb(172,195,230)" opacity="0.40"/><rect x="171" y="225" width="1" height="2.4" fill="rgb(177,168,159)" opacity="0.19"/><rect x="84" y="273" width="1" height="2.8" fill="rgb(162,184,217)" opacity="0.34"/><rect x="239" y="512" width="1" height="1.6" fill="rgb(118,134,158)" opacity="0.37"/><rect x="150" y="204" width="1" height="2.0" fill="rgb(127,139,159)" opacity="0.32"/><rect x="270" y="523" width="1" height="2.0" fill="rgb(147,166,196)" opacity="0.28"/><rect x="268" y="556" width="1" height="2.0" fill="rgb(201,201,201)" opacity="0.21"/><rect x="225" y="539" width="1" height="1.6" fill="rgb(227,227,227)" opacity="0.22"/><rect x="217" y="328" width="1" height="2.8" fill="rgb(221,221,221)" opacity="0.19"/><rect x="146" y="479" width="1" height="2.8" fill="rgb(138,157,185)" opacity="0.14"/><rect x="156" y="187" width="1" height="1.6" fill="rgb(154,154,154)" opacity="0.30"/><rect x="198" y="404" width="1" height="2.4" fill="rgb(146,165,195)" opacity="0.21"/><rect x="276" y="260" width="1" height="1.6" fill="rgb(183,201,229)" opacity="0.36"/><rect x="121" y="217" width="1" height="2.8" fill="rgb(116,131,155)" opacity="0.13"/><rect x="117" y="468" width="1" height="2.8" fill="rgb(157,149,141)" opacity="0.39"/><rect x="99" y="548" width="1" height="2.0" fill="rgb(164,181,206)" opacity="0.33"/><rect x="227" y="585" width="1" height="2.4" fill="rgb(172,163,154)" opacity="0.40"/><rect x="41" y="430" width="1" height="2.8" fill="rgb(168,185,211)" opacity="0.39"/><rect x="321" y="337" width="1" height="2.0" fill="rgb(179,179,179)" opacity="0.39"/><rect x="327" y="467" width="1" height="2.8" fill="rgb(236,224,212)" opacity="0.29"/><rect x="220" y="471" width="1" height="2.8" fill="rgb(174,165,156)" opacity="0.12"/><rect x="41" y="383" width="1" height="2.0" fill="rgb(147,161,184)" opacity="0.34"/><rect x="140" y="539" width="1" height="2.0" fill="rgb(233,233,233)" opacity="0.17"/><rect x="127" y="390" width="1" height="2.0" fill="rgb(148,163,186)" opacity="0.21"/><rect x="278" y="613" width="1" height="2.8" fill="rgb(152,144,136)" opacity="0.32"/><rect x="237" y="536" width="1" height="1.6" fill="rgb(179,170,161)" opacity="0.28"/><rect x="84" y="350" width="1" height="2.4" fill="rgb(136,149,170)" opacity="0.24"/><rect x="26" y="407" width="1" height="2.0" fill="rgb(176,194,221)" opacity="0.40"/><rect x="7" y="246" width="1" height="2.0" fill="rgb(180,180,180)" opacity="0.30"/><rect x="233" y="466" width="1" height="2.0" fill="rgb(218,218,218)" opacity="0.22"/><rect x="157" y="422" width="1" height="1.6" fill="rgb(156,148,140)" opacity="0.20"/><rect x="216" y="378" width="1" height="1.6" fill="rgb(172,190,216)" opacity="0.38"/><rect x="290" y="372" width="1" height="2.0" fill="rgb(162,178,203)" opacity="0.26"/><rect x="238" y="297" width="1" height="2.8" fill="rgb(218,207,196)" opacity="0.35"/><rect x="236" y="488" width="1" height="2.4" fill="rgb(175,166,157)" opacity="0.23"/><rect x="51" y="422" width="1" height="2.4" fill="rgb(172,172,172)" opacity="0.18"/><rect x="48" y="265" width="1" height="2.4" fill="rgb(194,184,174)" opacity="0.28"/><rect x="5" y="617" width="1" height="2.0" fill="rgb(145,160,182)" opacity="0.37"/><rect x="195" y="448" width="1" height="2.0" fill="rgb(219,208,197)" opacity="0.17"/><rect x="187" y="334" width="1" height="1.6" fill="rgb(175,175,175)" opacity="0.36"/><rect x="225" y="152" width="1" height="2.8" fill="rgb(201,190,180)" opacity="0.40"/><rect x="199" y="202" width="1" height="2.0" fill="rgb(218,218,218)" opacity="0.36"/><rect x="47" y="239" width="1" height="2.0" fill="rgb(150,170,200)" opacity="0.37"/><rect x="239" y="312" width="1" height="1.6" fill="rgb(163,185,218)" opacity="0.12"/><rect x="101" y="492" width="1" height="1.6" fill="rgb(114,129,152)" opacity="0.31"/><rect x="254" y="265" width="1" height="2.4" fill="rgb(157,157,157)" opacity="0.38"/><rect x="45" y="601" width="1" height="2.8" fill="rgb(163,163,163)" opacity="0.13"/><rect x="83" y="242" width="1" height="1.6" fill="rgb(214,203,192)" opacity="0.20"/><rect x="332" y="244" width="1" height="2.4" fill="rgb(159,175,199)" opacity="0.20"/><rect x="242" y="544" width="1" height="2.8" fill="rgb(222,210,199)" opacity="0.28"/><rect x="78" y="156" width="1" height="2.8" fill="rgb(136,150,171)" opacity="0.25"/><rect x="259" y="349" width="1" height="1.6" fill="rgb(184,174,165)" opacity="0.26"/><rect x="281" y="231" width="1" height="1.6" fill="rgb(152,144,136)" opacity="0.35"/><rect x="133" y="504" width="1" height="1.6" fill="rgb(154,169,193)" opacity="0.12"/><rect x="251" y="563" width="1" height="2.0" fill="rgb(164,181,206)" opacity="0.14"/><rect x="64" y="393" width="1" height="2.0" fill="rgb(162,183,216)" opacity="0.16"/><rect x="222" y="432" width="1" height="1.6" fill="rgb(118,134,158)" opacity="0.16"/><rect x="281" y="226" width="1" height="2.8" fill="rgb(126,142,168)" opacity="0.14"/><rect x="169" y="635" width="1" height="1.6" fill="rgb(222,210,199)" opacity="0.41"/><rect x="268" y="561" width="1" height="2.8" fill="rgb(174,197,232)" opacity="0.38"/><rect x="119" y="620" width="1" height="1.6" fill="rgb(156,148,140)" opacity="0.15"/><rect x="198" y="297" width="1" height="1.6" fill="rgb(126,143,169)" opacity="0.27"/><rect x="265" y="527" width="1" height="1.6" fill="rgb(203,192,182)" opacity="0.21"/><rect x="38" y="426" width="1" height="2.4" fill="rgb(151,151,151)" opacity="0.21"/><rect x="124" y="414" width="1" height="1.6" fill="rgb(173,196,231)" opacity="0.23"/><rect x="214" y="563" width="1" height="1.6" fill="rgb(155,175,207)" opacity="0.31"/><rect x="307" y="319" width="1" height="1.6" fill="rgb(134,147,168)" opacity="0.30"/><rect x="292" y="349" width="1" height="2.4" fill="rgb(147,166,196)" opacity="0.23"/><rect x="13" y="169" width="1" height="2.4" fill="rgb(184,202,230)" opacity="0.18"/><rect x="134" y="280" width="1" height="1.6" fill="rgb(229,229,229)" opacity="0.22"/><rect x="305" y="616" width="1" height="2.0" fill="rgb(202,202,202)" opacity="0.16"/><rect x="245" y="269" width="1" height="2.4" fill="rgb(176,176,176)" opacity="0.29"/><rect x="16" y="395" width="1" height="2.4" fill="rgb(176,176,176)" opacity="0.33"/><rect x="100" y="397" width="1" height="2.4" fill="rgb(154,146,138)" opacity="0.23"/><rect x="13" y="635" width="1" height="1.6" fill="rgb(162,178,203)" opacity="0.14"/><rect x="237" y="454" width="1" height="2.0" fill="rgb(217,206,195)" opacity="0.17"/><rect x="67" y="195" width="1" height="2.4" fill="rgb(166,166,166)" opacity="0.23"/><rect x="263" y="319" width="1" height="2.4" fill="rgb(156,176,208)" opacity="0.30"/><rect x="314" y="142" width="1" height="2.0" fill="rgb(212,212,212)" opacity="0.35"/><rect x="186" y="142" width="1" height="1.6" fill="rgb(128,140,160)" opacity="0.23"/><rect x="67" y="360" width="1" height="2.4" fill="rgb(181,171,162)" opacity="0.36"/><rect x="318" y="174" width="1" height="2.0" fill="rgb(180,198,226)" opacity="0.31"/><rect x="100" y="606" width="1" height="2.4" fill="rgb(204,193,183)" opacity="0.25"/><rect x="7" y="190" width="1" height="2.4" fill="rgb(230,218,207)" opacity="0.23"/><rect x="218" y="235" width="1" height="2.8" fill="rgb(215,204,193)" opacity="0.27"/><rect x="249" y="592" width="1" height="2.0" fill="rgb(207,196,186)" opacity="0.33"/><rect x="228" y="401" width="1" height="2.4" fill="rgb(222,210,199)" opacity="0.25"/><rect x="5" y="518" width="1" height="2.4" fill="rgb(208,197,187)" opacity="0.33"/><rect x="150" y="489" width="1" height="2.8" fill="rgb(153,168,192)" opacity="0.26"/><rect x="18" y="193" width="1" height="1.6" fill="rgb(113,128,151)" opacity="0.19"/><rect x="5" y="307" width="1" height="2.0" fill="rgb(225,225,225)" opacity="0.28"/><rect x="111" y="475" width="1" height="2.0" fill="rgb(232,232,232)" opacity="0.33"/><rect x="99" y="343" width="1" height="1.6" fill="rgb(154,169,193)" opacity="0.14"/><rect x="236" y="229" width="1" height="2.4" fill="rgb(160,181,214)" opacity="0.25"/><rect x="142" y="402" width="1" height="2.0" fill="rgb(209,209,209)" opacity="0.25"/><rect x="78" y="158" width="1" height="2.0" fill="rgb(144,158,180)" opacity="0.38"/><rect x="128" y="450" width="1" height="1.6" fill="rgb(141,159,188)" opacity="0.40"/><rect x="232" y="360" width="1" height="1.6" fill="rgb(136,150,171)" opacity="0.23"/><rect x="147" y="309" width="1" height="2.4" fill="rgb(215,204,193)" opacity="0.39"/><rect x="38" y="462" width="1" height="2.8" fill="rgb(165,187,220)" opacity="0.36"/><rect x="105" y="180" width="1" height="2.0" fill="rgb(212,212,212)" opacity="0.20"/><rect x="252" y="514" width="1" height="2.4" fill="rgb(183,173,164)" opacity="0.26"/><rect x="18" y="437" width="1" height="2.0" fill="rgb(172,189,215)" opacity="0.16"/><rect x="16" y="582" width="1" height="1.6" fill="rgb(177,177,177)" opacity="0.36"/><rect x="241" y="148" width="1" height="1.6" fill="rgb(157,157,157)" opacity="0.32"/><rect x="112" y="146" width="1" height="2.8" fill="rgb(120,132,151)" opacity="0.39"/><rect x="100" y="414" width="1" height="2.0" fill="rgb(145,160,182)" opacity="0.36"/><rect x="299" y="257" width="1" height="1.6" fill="rgb(221,209,198)" opacity="0.32"/><rect x="137" y="145" width="1" height="2.0" fill="rgb(173,173,173)" opacity="0.34"/><rect x="59" y="593" width="1" height="2.4" fill="rgb(162,162,162)" opacity="0.29"/><rect x="49" y="556" width="1" height="1.6" fill="rgb(135,148,169)" opacity="0.15"/><rect x="324" y="166" width="1" height="2.0" fill="rgb(161,152,144)" opacity="0.30"/><rect x="224" y="197" width="1" height="1.6" fill="rgb(175,175,175)" opacity="0.12"/><rect x="265" y="510" width="1" height="2.8" fill="rgb(139,158,186)" opacity="0.16"/><rect x="244" y="501" width="1" height="2.4" fill="rgb(130,147,174)" opacity="0.35"/><rect x="258" y="601" width="1" height="2.8" fill="rgb(228,216,205)" opacity="0.13"/><rect x="314" y="556" width="1" height="2.0" fill="rgb(159,180,212)" opacity="0.15"/><rect x="38" y="173" width="1" height="2.4" fill="rgb(153,174,205)" opacity="0.15"/><rect x="314" y="517" width="1" height="2.8" fill="rgb(197,187,177)" opacity="0.38"/><rect x="106" y="619" width="1" height="2.4" fill="rgb(215,215,215)" opacity="0.17"/><rect x="57" y="422" width="1" height="2.0" fill="rgb(176,193,220)" opacity="0.13"/><rect x="211" y="205" width="1" height="2.0" fill="rgb(120,136,160)" opacity="0.37"/><rect x="106" y="276" width="1" height="1.6" fill="rgb(157,178,210)" opacity="0.16"/><rect x="185" y="583" width="1" height="2.4" fill="rgb(130,143,163)" opacity="0.37"/><rect x="63" y="406" width="1" height="2.4" fill="rgb(124,136,155)" opacity="0.32"/><rect x="123" y="607" width="1" height="2.4" fill="rgb(146,165,195)" opacity="0.37"/><rect x="62" y="326" width="1" height="1.6" fill="rgb(147,161,184)" opacity="0.41"/><rect x="286" y="302" width="1" height="2.4" fill="rgb(160,176,201)" opacity="0.29"/><rect x="78" y="283" width="1" height="2.0" fill="rgb(222,222,222)" opacity="0.36"/><rect x="46" y="323" width="1" height="2.0" fill="rgb(147,161,184)" opacity="0.13"/><rect x="105" y="394" width="1" height="2.8" fill="rgb(219,208,197)" opacity="0.35"/><rect x="160" y="395" width="1" height="2.8" fill="rgb(156,171,195)" opacity="0.27"/><rect x="93" y="252" width="1" height="2.0" fill="rgb(134,147,168)" opacity="0.33"/><rect x="164" y="230" width="1" height="2.0" fill="rgb(196,196,196)" opacity="0.15"/><rect x="292" y="181" width="1" height="2.4" fill="rgb(185,204,232)" opacity="0.34"/><rect x="233" y="557" width="1" height="2.0" fill="rgb(240,240,240)" opacity="0.40"/><rect x="162" y="155" width="1" height="2.8" fill="rgb(117,132,156)" opacity="0.14"/><rect x="46" y="171" width="1" height="2.4" fill="rgb(142,161,190)" opacity="0.22"/><rect x="193" y="379" width="1" height="2.4" fill="rgb(203,203,203)" opacity="0.29"/><rect x="222" y="569" width="1" height="2.4" fill="rgb(121,133,152)" opacity="0.37"/><rect x="88" y="548" width="1" height="2.8" fill="rgb(189,179,170)" opacity="0.19"/><rect x="99" y="456" width="1" height="2.8" fill="rgb(156,156,156)" opacity="0.17"/><rect x="207" y="277" width="1" height="2.4" fill="rgb(233,221,209)" opacity="0.19"/><rect x="228" y="299" width="1" height="2.8" fill="rgb(195,195,195)" opacity="0.30"/><rect x="251" y="487" width="1" height="2.8" fill="rgb(174,165,156)" opacity="0.35"/><rect x="162" y="488" width="1" height="1.6" fill="rgb(123,135,154)" opacity="0.24"/><rect x="13" y="392" width="1" height="2.4" fill="rgb(222,210,199)" opacity="0.23"/><rect x="268" y="420" width="1" height="1.6" fill="rgb(213,202,191)" opacity="0.24"/><rect x="244" y="555" width="1" height="2.4" fill="rgb(165,182,207)" opacity="0.23"/><rect x="245" y="550" width="1" height="2.4" fill="rgb(164,181,206)" opacity="0.25"/><rect x="149" y="575" width="1" height="2.0" fill="rgb(139,153,174)" opacity="0.14"/><rect x="281" y="617" width="1" height="2.0" fill="rgb(166,188,222)" opacity="0.27"/><rect x="161" y="427" width="1" height="2.8" fill="rgb(228,228,228)" opacity="0.41"/><rect x="172" y="634" width="1" height="2.4" fill="rgb(209,209,209)" opacity="0.24"/><rect x="334" y="303" width="1" height="2.0" fill="rgb(129,147,173)" opacity="0.34"/><rect x="144" y="367" width="1" height="2.0" fill="rgb(165,187,220)" opacity="0.17"/><rect x="171" y="292" width="1" height="2.0" fill="rgb(132,149,176)" opacity="0.33"/><rect x="274" y="308" width="1" height="2.0" fill="rgb(204,193,183)" opacity="0.35"/><rect x="148" y="547" width="1" height="2.0" fill="rgb(154,175,206)" opacity="0.32"/><rect x="243" y="186" width="1" height="2.8" fill="rgb(159,175,199)" opacity="0.28"/><rect x="160" y="400" width="1" height="2.0" fill="rgb(225,225,225)" opacity="0.27"/><rect x="199" y="383" width="1" height="2.0" fill="rgb(140,158,187)" opacity="0.31"/><rect x="92" y="578" width="1" height="1.6" fill="rgb(153,153,153)" opacity="0.39"/><rect x="185" y="361" width="1" height="2.4" fill="rgb(190,180,171)" opacity="0.16"/><rect x="34" y="164" width="1" height="2.8" fill="rgb(156,177,209)" opacity="0.15"/><rect x="171" y="220" width="1" height="2.8" fill="rgb(219,208,197)" opacity="0.34"/><rect x="108" y="313" width="1" height="2.0" fill="rgb(133,146,167)" opacity="0.39"/><rect x="331" y="583" width="1" height="1.6" fill="rgb(186,205,233)" opacity="0.28"/><rect x="143" y="365" width="1" height="2.4" fill="rgb(147,167,197)" opacity="0.25"/><rect x="131" y="498" width="1" height="2.8" fill="rgb(141,159,188)" opacity="0.34"/><rect x="254" y="225" width="1" height="2.8" fill="rgb(169,186,212)" opacity="0.18"/><rect x="36" y="199" width="1" height="2.8" fill="rgb(142,161,190)" opacity="0.20"/><rect x="188" y="457" width="1" height="2.8" fill="rgb(168,190,224)" opacity="0.18"/><rect x="233" y="551" width="1" height="2.0" fill="rgb(141,155,177)" opacity="0.30"/><rect x="289" y="607" width="1" height="1.6" fill="rgb(117,132,156)" opacity="0.21"/><rect x="318" y="310" width="1" height="2.0" fill="rgb(196,186,176)" opacity="0.19"/><rect x="288" y="282" width="1" height="2.8" fill="rgb(133,151,178)" opacity="0.33"/><rect x="130" y="526" width="1" height="2.4" fill="rgb(151,143,135)" opacity="0.41"/><rect x="263" y="559" width="1" height="1.6" fill="rgb(142,156,178)" opacity="0.21"/><rect x="108" y="239" width="1" height="2.8" fill="rgb(187,187,187)" opacity="0.33"/><rect x="118" y="544" width="1" height="2.0" fill="rgb(169,169,169)" opacity="0.24"/><rect x="49" y="357" width="1" height="2.0" fill="rgb(164,186,219)" opacity="0.38"/><rect x="56" y="408" width="1" height="2.8" fill="rgb(168,168,168)" opacity="0.30"/><rect x="44" y="204" width="1" height="2.0" fill="rgb(144,163,192)" opacity="0.20"/><rect x="263" y="251" width="1" height="2.8" fill="rgb(238,226,214)" opacity="0.19"/><rect x="220" y="204" width="1" height="2.0" fill="rgb(168,184,210)" opacity="0.13"/><rect x="46" y="587" width="1" height="2.8" fill="rgb(194,194,194)" opacity="0.26"/><rect x="178" y="583" width="1" height="1.6" fill="rgb(144,158,180)" opacity="0.23"/><rect x="102" y="271" width="1" height="1.6" fill="rgb(172,190,216)" opacity="0.17"/><rect x="274" y="525" width="1" height="2.4" fill="rgb(164,155,147)" opacity="0.23"/><rect x="242" y="637" width="1" height="2.4" fill="rgb(216,205,194)" opacity="0.22"/><rect x="125" y="312" width="1" height="2.8" fill="rgb(199,189,179)" opacity="0.35"/><rect x="185" y="241" width="1" height="2.0" fill="rgb(126,139,158)" opacity="0.16"/><rect x="81" y="335" width="1" height="1.6" fill="rgb(228,216,205)" opacity="0.42"/><rect x="275" y="549" width="1" height="2.8" fill="rgb(150,150,150)" opacity="0.26"/><rect x="94" y="204" width="1" height="2.8" fill="rgb(135,153,180)" opacity="0.30"/><rect x="197" y="161" width="1" height="2.4" fill="rgb(166,183,208)" opacity="0.26"/><rect x="118" y="560" width="1" height="2.8" fill="rgb(181,181,181)" opacity="0.37"/><rect x="271" y="321" width="1" height="1.6" fill="rgb(126,143,169)" opacity="0.37"/><rect x="9" y="171" width="1" height="1.6" fill="rgb(225,213,202)" opacity="0.29"/><rect x="203" y="186" width="1" height="2.8" fill="rgb(218,207,196)" opacity="0.26"/><rect x="336" y="328" width="1" height="1.6" fill="rgb(190,180,171)" opacity="0.34"/><rect x="199" y="573" width="1" height="1.6" fill="rgb(197,197,197)" opacity="0.38"/><rect x="298" y="236" width="1" height="1.6" fill="rgb(238,238,238)" opacity="0.24"/><rect x="307" y="255" width="1" height="1.6" fill="rgb(189,179,170)" opacity="0.34"/><rect x="189" y="334" width="1" height="2.4" fill="rgb(155,155,155)" opacity="0.41"/><rect x="161" y="247" width="1" height="2.8" fill="rgb(191,181,171)" opacity="0.26"/><rect x="91" y="224" width="1" height="2.8" fill="rgb(240,228,216)" opacity="0.19"/><rect x="199" y="298" width="1" height="2.8" fill="rgb(234,222,210)" opacity="0.19"/><rect x="189" y="337" width="1" height="2.4" fill="rgb(184,202,230)" opacity="0.34"/><rect x="335" y="385" width="1" height="2.4" fill="rgb(123,139,164)" opacity="0.32"/><rect x="104" y="632" width="1" height="1.6" fill="rgb(150,165,188)" opacity="0.41"/><rect x="46" y="366" width="1" height="2.8" fill="rgb(154,146,138)" opacity="0.38"/><rect x="307" y="410" width="1" height="2.0" fill="rgb(166,166,166)" opacity="0.19"/><rect x="210" y="170" width="1" height="1.6" fill="rgb(156,177,209)" opacity="0.18"/><rect x="244" y="389" width="1" height="1.6" fill="rgb(152,144,136)" opacity="0.20"/><rect x="109" y="449" width="1" height="1.6" fill="rgb(239,227,215)" opacity="0.18"/><rect x="179" y="433" width="1" height="2.0" fill="rgb(236,236,236)" opacity="0.33"/><rect x="208" y="543" width="1" height="2.0" fill="rgb(123,140,165)" opacity="0.38"/><rect x="51" y="572" width="1" height="2.8" fill="rgb(120,136,161)" opacity="0.39"/><rect x="45" y="428" width="1" height="2.4" fill="rgb(181,181,181)" opacity="0.20"/><rect x="334" y="354" width="1" height="2.8" fill="rgb(186,176,167)" opacity="0.38"/><rect x="273" y="230" width="1" height="2.8" fill="rgb(236,236,236)" opacity="0.21"/><rect x="140" y="610" width="1" height="2.0" fill="rgb(172,189,215)" opacity="0.25"/><rect x="77" y="611" width="1" height="2.8" fill="rgb(196,196,196)" opacity="0.34"/><rect x="73" y="267" width="1" height="1.6" fill="rgb(238,226,214)" opacity="0.15"/><rect x="247" y="605" width="1" height="2.8" fill="rgb(228,228,228)" opacity="0.15"/><rect x="262" y="490" width="1" height="2.8" fill="rgb(140,154,176)" opacity="0.37"/><rect x="265" y="329" width="1" height="2.0" fill="rgb(218,218,218)" opacity="0.21"/><rect x="166" y="187" width="1" height="2.0" fill="rgb(187,177,168)" opacity="0.23"/><rect x="33" y="259" width="1" height="2.0" fill="rgb(223,223,223)" opacity="0.29"/><rect x="238" y="611" width="1" height="2.8" fill="rgb(231,219,207)" opacity="0.32"/><rect x="142" y="517" width="1" height="2.0" fill="rgb(230,218,207)" opacity="0.12"/><rect x="20" y="332" width="1" height="2.0" fill="rgb(205,205,205)" opacity="0.22"/><rect x="161" y="349" width="1" height="2.4" fill="rgb(215,215,215)" opacity="0.25"/><rect x="52" y="496" width="1" height="1.6" fill="rgb(183,183,183)" opacity="0.27"/><rect x="153" y="514" width="1" height="1.6" fill="rgb(148,163,186)" opacity="0.18"/><rect x="327" y="151" width="1" height="2.8" fill="rgb(179,197,224)" opacity="0.30"/><rect x="284" y="254" width="1" height="1.6" fill="rgb(153,145,137)" opacity="0.41"/><rect x="28" y="475" width="1" height="2.4" fill="rgb(208,208,208)" opacity="0.24"/><rect x="117" y="158" width="1" height="2.4" fill="rgb(159,159,159)" opacity="0.28"/><rect x="31" y="374" width="1" height="2.0" fill="rgb(146,165,195)" opacity="0.16"/><rect x="120" y="402" width="1" height="2.0" fill="rgb(152,168,191)" opacity="0.20"/><rect x="236" y="293" width="1" height="2.4" fill="rgb(141,160,189)" opacity="0.32"/><rect x="221" y="264" width="1" height="2.0" fill="rgb(187,205,234)" opacity="0.15"/><rect x="290" y="179" width="1" height="2.0" fill="rgb(160,176,201)" opacity="0.39"/><rect x="186" y="597" width="1" height="2.4" fill="rgb(229,229,229)" opacity="0.39"/><rect x="238" y="217" width="1" height="2.8" fill="rgb(165,182,207)" opacity="0.15"/><rect x="236" y="293" width="1" height="2.8" fill="rgb(133,151,178)" opacity="0.40"/><rect x="23" y="551" width="1" height="2.8" fill="rgb(165,156,148)" opacity="0.23"/><rect x="321" y="367" width="1" height="2.0" fill="rgb(219,219,219)" opacity="0.35"/><rect x="104" y="398" width="1" height="2.4" fill="rgb(140,158,187)" opacity="0.35"/><rect x="90" y="161" width="1" height="1.6" fill="rgb(151,143,135)" opacity="0.21"/><rect x="106" y="470" width="1" height="1.6" fill="rgb(131,144,164)" opacity="0.32"/><rect x="66" y="593" width="1" height="2.8" fill="rgb(229,229,229)" opacity="0.32"/><rect x="10" y="251" width="1" height="1.6" fill="rgb(168,184,210)" opacity="0.36"/><rect x="21" y="575" width="1" height="2.4" fill="rgb(191,191,191)" opacity="0.20"/><rect x="3" y="278" width="1" height="2.8" fill="rgb(183,173,164)" opacity="0.35"/><rect x="180" y="277" width="1" height="2.8" fill="rgb(173,164,155)" opacity="0.41"/><rect x="208" y="402" width="1" height="2.4" fill="rgb(216,216,216)" opacity="0.32"/><rect x="107" y="158" width="1" height="1.6" fill="rgb(202,191,181)" opacity="0.28"/><rect x="12" y="416" width="1" height="2.4" fill="rgb(219,208,197)" opacity="0.15"/><rect x="73" y="290" width="1" height="1.6" fill="rgb(148,168,198)" opacity="0.27"/><rect x="90" y="407" width="1" height="2.0" fill="rgb(174,191,218)" opacity="0.23"/><rect x="162" y="163" width="1" height="1.6" fill="rgb(150,170,201)" opacity="0.34"/><rect x="33" y="613" width="1" height="2.8" fill="rgb(240,228,216)" opacity="0.32"/><rect x="317" y="247" width="1" height="2.8" fill="rgb(209,209,209)" opacity="0.29"/><rect x="21" y="307" width="1" height="2.4" fill="rgb(210,199,189)" opacity="0.17"/><rect x="289" y="262" width="1" height="2.8" fill="rgb(154,175,206)" opacity="0.31"/><rect x="335" y="422" width="1" height="2.0" fill="rgb(198,198,198)" opacity="0.31"/><rect x="202" y="542" width="1" height="2.8" fill="rgb(159,159,159)" opacity="0.17"/><rect x="167" y="629" width="1" height="2.0" fill="rgb(208,208,208)" opacity="0.39"/><rect x="173" y="584" width="1" height="2.4" fill="rgb(236,236,236)" opacity="0.32"/><rect x="177" y="446" width="1" height="2.0" fill="rgb(153,168,192)" opacity="0.16"/><rect x="105" y="360" width="1" height="2.8" fill="rgb(181,171,162)" opacity="0.40"/><rect x="169" y="198" width="1" height="1.6" fill="rgb(183,183,183)" opacity="0.16"/><rect x="173" y="228" width="1" height="2.0" fill="rgb(187,187,187)" opacity="0.22"/><rect x="134" y="546" width="1" height="1.6" fill="rgb(207,196,186)" opacity="0.34"/><rect x="190" y="606" width="1" height="1.6" fill="rgb(154,154,154)" opacity="0.30"/><rect x="91" y="226" width="1" height="1.6" fill="rgb(158,179,211)" opacity="0.29"/><rect x="115" y="563" width="1" height="1.6" fill="rgb(133,151,178)" opacity="0.31"/><rect x="173" y="335" width="1" height="1.6" fill="rgb(137,151,172)" opacity="0.26"/><rect x="59" y="139" width="1" height="1.6" fill="rgb(174,191,218)" opacity="0.21"/><rect x="75" y="608" width="1" height="2.0" fill="rgb(236,224,212)" opacity="0.17"/><rect x="204" y="497" width="1" height="2.8" fill="rgb(202,191,181)" opacity="0.14"/><rect x="114" y="603" width="1" height="2.8" fill="rgb(160,152,144)" opacity="0.33"/><rect x="145" y="557" width="1" height="2.4" fill="rgb(172,189,215)" opacity="0.35"/><rect x="252" y="281" width="1" height="2.8" fill="rgb(194,184,174)" opacity="0.28"/><rect x="97" y="317" width="1" height="2.4" fill="rgb(175,192,219)" opacity="0.34"/><rect x="222" y="269" width="1" height="2.4" fill="rgb(159,175,199)" opacity="0.23"/><rect x="270" y="264" width="1" height="2.8" fill="rgb(121,133,152)" opacity="0.20"/><rect x="51" y="330" width="1" height="1.6" fill="rgb(172,172,172)" opacity="0.24"/><rect x="246" y="373" width="1" height="2.4" fill="rgb(153,153,153)" opacity="0.38"/><rect x="159" y="510" width="1" height="2.8" fill="rgb(132,149,176)" opacity="0.13"/><rect x="303" y="576" width="1" height="2.4" fill="rgb(233,221,209)" opacity="0.27"/><rect x="276" y="359" width="1" height="2.8" fill="rgb(194,184,174)" opacity="0.19"/><rect x="245" y="356" width="1" height="2.0" fill="rgb(147,161,184)" opacity="0.35"/><rect x="111" y="314" width="1" height="2.4" fill="rgb(198,198,198)" opacity="0.23"/><rect x="327" y="210" width="1" height="2.0" fill="rgb(230,230,230)" opacity="0.22"/><rect x="237" y="317" width="1" height="2.0" fill="rgb(173,190,217)" opacity="0.24"/><rect x="286" y="207" width="1" height="2.8" fill="rgb(201,190,180)" opacity="0.28"/><rect x="263" y="405" width="1" height="2.0" fill="rgb(114,130,153)" opacity="0.35"/><rect x="307" y="360" width="1" height="2.8" fill="rgb(168,191,225)" opacity="0.23"/><rect x="114" y="379" width="1" height="1.6" fill="rgb(193,193,193)" opacity="0.37"/><rect x="309" y="417" width="1" height="1.6" fill="rgb(168,184,210)" opacity="0.15"/><rect x="8" y="277" width="1" height="2.4" fill="rgb(208,197,187)" opacity="0.20"/><rect x="290" y="480" width="1" height="1.6" fill="rgb(221,209,198)" opacity="0.15"/><rect x="156" y="173" width="1" height="1.6" fill="rgb(152,167,190)" opacity="0.15"/><rect x="128" y="165" width="1" height="2.8" fill="rgb(194,194,194)" opacity="0.35"/><rect x="3" y="405" width="1" height="2.8" fill="rgb(200,200,200)" opacity="0.34"/><rect x="233" y="186" width="1" height="1.6" fill="rgb(201,201,201)" opacity="0.18"/><rect x="315" y="417" width="1" height="2.0" fill="rgb(151,171,202)" opacity="0.18"/><rect x="14" y="604" width="1" height="2.0" fill="rgb(186,176,167)" opacity="0.24"/><rect x="158" y="285" width="1" height="1.6" fill="rgb(169,192,226)" opacity="0.34"/><rect x="132" y="610" width="1" height="2.4" fill="rgb(161,177,202)" opacity="0.36"/><rect x="132" y="633" width="1" height="1.6" fill="rgb(176,194,221)" opacity="0.34"/><rect x="322" y="335" width="1" height="1.6" fill="rgb(200,190,180)" opacity="0.30"/><rect x="249" y="217" width="1" height="2.8" fill="rgb(173,196,231)" opacity="0.16"/><rect x="86" y="141" width="1" height="2.8" fill="rgb(165,165,165)" opacity="0.24"/><rect x="157" y="531" width="1" height="1.6" fill="rgb(124,136,155)" opacity="0.18"/><rect x="314" y="503" width="1" height="1.6" fill="rgb(224,224,224)" opacity="0.28"/><rect x="49" y="311" width="1" height="2.0" fill="rgb(156,148,140)" opacity="0.29"/><rect x="193" y="577" width="1" height="2.8" fill="rgb(128,145,171)" opacity="0.18"/><rect x="267" y="421" width="1" height="1.6" fill="rgb(128,145,171)" opacity="0.20"/><rect x="272" y="162" width="1" height="1.6" fill="rgb(113,128,151)" opacity="0.35"/><rect x="0" y="470" width="1" height="2.4" fill="rgb(138,157,185)" opacity="0.13"/><rect x="40" y="622" width="1" height="2.0" fill="rgb(133,151,178)" opacity="0.36"/><rect x="298" y="609" width="1" height="1.6" fill="rgb(196,186,176)" opacity="0.39"/><rect x="274" y="215" width="1" height="2.4" fill="rgb(123,139,164)" opacity="0.40"/><rect x="71" y="601" width="1" height="1.6" fill="rgb(134,147,168)" opacity="0.23"/><rect x="283" y="317" width="1" height="2.4" fill="rgb(166,157,149)" opacity="0.29"/><rect x="210" y="193" width="1" height="2.4" fill="rgb(117,132,156)" opacity="0.29"/><rect x="70" y="558" width="1" height="2.4" fill="rgb(180,171,162)" opacity="0.31"/><rect x="1" y="385" width="1" height="2.8" fill="rgb(171,188,214)" opacity="0.41"/><rect x="30" y="539" width="1" height="2.0" fill="rgb(185,185,185)" opacity="0.33"/><rect x="137" y="195" width="1" height="2.0" fill="rgb(164,181,206)" opacity="0.21"/><rect x="123" y="491" width="1" height="2.0" fill="rgb(145,164,194)" opacity="0.38"/><rect x="87" y="380" width="1" height="2.4" fill="rgb(226,226,226)" opacity="0.27"/><rect x="316" y="539" width="1" height="2.4" fill="rgb(191,210,239)" opacity="0.30"/><rect x="78" y="351" width="1" height="2.0" fill="rgb(147,167,197)" opacity="0.34"/><rect x="2" y="334" width="1" height="2.8" fill="rgb(167,189,223)" opacity="0.12"/><rect x="198" y="485" width="1" height="2.4" fill="rgb(150,170,201)" opacity="0.35"/><rect x="313" y="601" width="1" height="2.8" fill="rgb(164,180,205)" opacity="0.32"/><rect x="260" y="498" width="1" height="2.0" fill="rgb(163,163,163)" opacity="0.27"/><rect x="76" y="580" width="1" height="2.8" fill="rgb(154,175,206)" opacity="0.28"/><rect x="2" y="337" width="1" height="2.8" fill="rgb(180,198,225)" opacity="0.26"/><rect x="133" y="187" width="1" height="2.8" fill="rgb(185,204,232)" opacity="0.18"/><rect x="104" y="417" width="1" height="2.4" fill="rgb(115,130,154)" opacity="0.28"/><rect x="85" y="463" width="1" height="2.0" fill="rgb(188,178,169)" opacity="0.13"/><rect x="176" y="243" width="1" height="2.4" fill="rgb(116,131,155)" opacity="0.27"/><rect x="89" y="283" width="1" height="2.4" fill="rgb(153,168,192)" opacity="0.31"/><rect x="227" y="610" width="1" height="2.8" fill="rgb(170,187,213)" opacity="0.25"/><rect x="196" y="626" width="1" height="2.4" fill="rgb(190,190,190)" opacity="0.29"/><rect x="268" y="618" width="1" height="2.0" fill="rgb(172,195,230)" opacity="0.41"/><rect x="116" y="451" width="1" height="2.0" fill="rgb(216,205,194)" opacity="0.39"/><rect x="11" y="147" width="1" height="2.0" fill="rgb(206,206,206)" opacity="0.16"/><rect x="297" y="278" width="1" height="2.8" fill="rgb(188,206,235)" opacity="0.36"/><rect x="56" y="157" width="1" height="2.8" fill="rgb(199,199,199)" opacity="0.31"/><rect x="333" y="162" width="1" height="2.8" fill="rgb(134,152,179)" opacity="0.14"/><rect x="164" y="239" width="1" height="2.4" fill="rgb(215,215,215)" opacity="0.23"/><rect x="136" y="466" width="1" height="1.6" fill="rgb(180,171,162)" opacity="0.19"/><rect x="141" y="336" width="1" height="2.4" fill="rgb(182,182,182)" opacity="0.14"/><rect x="263" y="227" width="1" height="2.8" fill="rgb(182,172,163)" opacity="0.28"/><rect x="100" y="164" width="1" height="2.0" fill="rgb(129,146,172)" opacity="0.40"/><rect x="227" y="414" width="1" height="1.6" fill="rgb(166,188,222)" opacity="0.22"/><rect x="115" y="266" width="1" height="1.6" fill="rgb(180,198,226)" opacity="0.38"/><rect x="236" y="427" width="1" height="2.0" fill="rgb(198,198,198)" opacity="0.33"/><rect x="230" y="475" width="1" height="2.0" fill="rgb(217,206,195)" opacity="0.16"/><rect x="309" y="336" width="1" height="2.0" fill="rgb(162,178,203)" opacity="0.38"/><rect x="206" y="409" width="1" height="2.0" fill="rgb(144,163,192)" opacity="0.30"/><rect x="86" y="332" width="1" height="2.4" fill="rgb(176,199,235)" opacity="0.40"/><rect x="240" y="495" width="1" height="2.4" fill="rgb(138,156,184)" opacity="0.33"/><rect x="74" y="569" width="1" height="1.6" fill="rgb(218,218,218)" opacity="0.34"/><rect x="57" y="299" width="1" height="2.0" fill="rgb(170,170,170)" opacity="0.22"/><rect x="87" y="457" width="1" height="1.6" fill="rgb(198,198,198)" opacity="0.36"/><rect x="243" y="609" width="1" height="2.8" fill="rgb(141,159,188)" opacity="0.40"/><rect x="120" y="237" width="1" height="2.8" fill="rgb(138,157,185)" opacity="0.38"/><rect x="265" y="316" width="1" height="1.6" fill="rgb(199,199,199)" opacity="0.25"/><rect x="261" y="242" width="1" height="2.4" fill="rgb(189,189,189)" opacity="0.35"/><rect x="1" y="483" width="1" height="2.8" fill="rgb(228,216,205)" opacity="0.27"/><rect x="306" y="350" width="1" height="2.0" fill="rgb(196,186,176)" opacity="0.15"/><rect x="290" y="282" width="1" height="2.0" fill="rgb(162,162,162)" opacity="0.13"/><rect x="308" y="423" width="1" height="1.6" fill="rgb(240,228,216)" opacity="0.14"/><rect x="127" y="355" width="1" height="2.0" fill="rgb(175,175,175)" opacity="0.18"/><rect x="161" y="224" width="1" height="1.6" fill="rgb(133,146,167)" opacity="0.17"/><rect x="109" y="358" width="1" height="2.8" fill="rgb(171,162,153)" opacity="0.27"/><rect x="62" y="390" width="1" height="2.0" fill="rgb(189,208,237)" opacity="0.33"/><rect x="328" y="417" width="1" height="2.4" fill="rgb(112,127,150)" opacity="0.28"/><rect x="72" y="606" width="1" height="2.0" fill="rgb(187,205,234)" opacity="0.25"/><rect x="53" y="347" width="1" height="2.0" fill="rgb(166,166,166)" opacity="0.31"/><rect x="54" y="347" width="1" height="2.0" fill="rgb(200,190,180)" opacity="0.21"/><rect x="271" y="259" width="1" height="2.0" fill="rgb(127,139,159)" opacity="0.26"/><rect x="206" y="490" width="1" height="1.6" fill="rgb(126,142,168)" opacity="0.35"/><rect x="253" y="426" width="1" height="2.4" fill="rgb(197,197,197)" opacity="0.24"/><rect x="60" y="422" width="1" height="2.0" fill="rgb(164,180,205)" opacity="0.17"/><rect x="40" y="582" width="1" height="2.0" fill="rgb(153,173,204)" opacity="0.39"/><rect x="189" y="334" width="1" height="1.6" fill="rgb(188,206,235)" opacity="0.34"/><rect x="16" y="322" width="1" height="2.0" fill="rgb(229,217,206)" opacity="0.23"/><rect x="157" y="325" width="1" height="2.0" fill="rgb(169,160,152)" opacity="0.23"/><rect x="181" y="438" width="1" height="2.4" fill="rgb(132,146,166)" opacity="0.28"/><rect x="224" y="467" width="1" height="2.4" fill="rgb(163,179,204)" opacity="0.30"/><rect x="21" y="240" width="1" height="2.4" fill="rgb(239,239,239)" opacity="0.19"/><rect x="209" y="353" width="1" height="2.8" fill="rgb(156,176,208)" opacity="0.12"/><rect x="35" y="391" width="1" height="1.6" fill="rgb(158,174,198)" opacity="0.18"/><rect x="312" y="323" width="1" height="2.8" fill="rgb(204,204,204)" opacity="0.35"/><rect x="80" y="639" width="1" height="2.0" fill="rgb(221,221,221)" opacity="0.16"/><rect x="106" y="628" width="1" height="2.0" fill="rgb(167,158,150)" opacity="0.26"/><rect x="48" y="637" width="1" height="1.6" fill="rgb(198,198,198)" opacity="0.18"/><rect x="319" y="559" width="1" height="1.6" fill="rgb(156,172,196)" opacity="0.18"/><rect x="74" y="379" width="1" height="2.0" fill="rgb(140,154,175)" opacity="0.17"/><rect x="329" y="307" width="1" height="2.8" fill="rgb(179,203,239)" opacity="0.24"/><rect x="271" y="445" width="1" height="2.0" fill="rgb(171,188,214)" opacity="0.17"/><rect x="327" y="424" width="1" height="2.4" fill="rgb(151,151,151)" opacity="0.13"/><rect x="178" y="227" width="1" height="2.8" fill="rgb(219,219,219)" opacity="0.15"/><rect x="276" y="159" width="1" height="2.4" fill="rgb(125,141,167)" opacity="0.17"/><rect x="252" y="586" width="1" height="2.8" fill="rgb(209,209,209)" opacity="0.27"/><rect x="96" y="431" width="1" height="1.6" fill="rgb(197,197,197)" opacity="0.14"/><rect x="284" y="341" width="1" height="2.4" fill="rgb(191,210,239)" opacity="0.13"/><rect x="316" y="247" width="1" height="2.0" fill="rgb(144,163,192)" opacity="0.25"/><rect x="17" y="146" width="1" height="2.4" fill="rgb(173,164,155)" opacity="0.24"/><rect x="12" y="538" width="1" height="1.6" fill="rgb(162,184,217)" opacity="0.33"/><rect x="84" y="595" width="1" height="2.8" fill="rgb(120,132,151)" opacity="0.14"/><rect x="272" y="565" width="1" height="1.6" fill="rgb(154,146,138)" opacity="0.24"/><rect x="141" y="262" width="1" height="2.4" fill="rgb(216,205,194)" opacity="0.24"/><rect x="272" y="629" width="1" height="2.4" fill="rgb(168,184,210)" opacity="0.13"/><rect x="202" y="604" width="1" height="2.0" fill="rgb(144,159,181)" opacity="0.41"/><rect x="206" y="505" width="1" height="2.0" fill="rgb(153,168,192)" opacity="0.19"/><rect x="298" y="579" width="1" height="2.4" fill="rgb(166,166,166)" opacity="0.15"/><rect x="119" y="589" width="1" height="1.6" fill="rgb(239,239,239)" opacity="0.26"/><rect x="317" y="355" width="1" height="2.0" fill="rgb(150,170,200)" opacity="0.17"/><rect x="255" y="531" width="1" height="2.8" fill="rgb(145,164,194)" opacity="0.31"/><rect x="91" y="294" width="1" height="2.8" fill="rgb(238,238,238)" opacity="0.22"/><rect x="3" y="436" width="1" height="2.0" fill="rgb(209,209,209)" opacity="0.16"/><rect x="132" y="638" width="1" height="2.0" fill="rgb(228,216,205)" opacity="0.14"/><rect x="285" y="276" width="1" height="1.6" fill="rgb(141,155,177)" opacity="0.34"/><rect x="309" y="635" width="1" height="2.0" fill="rgb(161,161,161)" opacity="0.20"/><rect x="268" y="407" width="1" height="2.8" fill="rgb(240,240,240)" opacity="0.36"/><rect x="318" y="220" width="1" height="2.4" fill="rgb(229,229,229)" opacity="0.26"/><rect x="232" y="603" width="1" height="2.8" fill="rgb(228,228,228)" opacity="0.40"/><rect x="21" y="472" width="1" height="2.8" fill="rgb(136,154,182)" opacity="0.21"/><rect x="196" y="353" width="1" height="2.0" fill="rgb(229,229,229)" opacity="0.19"/><rect x="117" y="508" width="1" height="2.8" fill="rgb(194,194,194)" opacity="0.20"/><rect x="76" y="290" width="1" height="2.0" fill="rgb(188,206,235)" opacity="0.36"/><rect x="172" y="160" width="1" height="1.6" fill="rgb(168,190,224)" opacity="0.31"/><rect x="37" y="458" width="1" height="2.8" fill="rgb(131,144,164)" opacity="0.22"/><rect x="84" y="373" width="1" height="2.8" fill="rgb(124,137,156)" opacity="0.15"/><rect x="121" y="284" width="1" height="2.8" fill="rgb(198,198,198)" opacity="0.32"/><rect x="334" y="393" width="1" height="1.6" fill="rgb(204,193,183)" opacity="0.41"/><rect x="304" y="319" width="1" height="1.6" fill="rgb(172,190,216)" opacity="0.30"/><rect x="64" y="312" width="1" height="2.8" fill="rgb(180,171,162)" opacity="0.12"/><rect x="79" y="247" width="1" height="2.0" fill="rgb(215,215,215)" opacity="0.13"/><rect x="30" y="149" width="1" height="2.0" fill="rgb(164,186,219)" opacity="0.15"/><rect x="333" y="206" width="1" height="2.4" fill="rgb(182,172,163)" opacity="0.17"/><rect x="14" y="168" width="1" height="1.6" fill="rgb(236,224,212)" opacity="0.13"/><rect x="106" y="605" width="1" height="2.4" fill="rgb(236,224,212)" opacity="0.14"/><rect x="163" y="475" width="1" height="1.6" fill="rgb(224,224,224)" opacity="0.32"/><rect x="70" y="454" width="1" height="1.6" fill="rgb(181,171,162)" opacity="0.39"/><rect x="326" y="245" width="1" height="2.8" fill="rgb(140,158,187)" opacity="0.18"/><rect x="188" y="496" width="1" height="2.8" fill="rgb(176,167,158)" opacity="0.41"/><rect x="10" y="624" width="1" height="2.0" fill="rgb(229,217,206)" opacity="0.26"/><rect x="275" y="345" width="1" height="2.8" fill="rgb(173,164,155)" opacity="0.36"/><rect x="245" y="248" width="1" height="2.4" fill="rgb(213,213,213)" opacity="0.40"/><rect x="166" y="609" width="1" height="1.6" fill="rgb(195,195,195)" opacity="0.40"/><rect x="150" y="245" width="1" height="2.8" fill="rgb(125,138,157)" opacity="0.13"/><rect x="177" y="539" width="1" height="1.6" fill="rgb(172,189,215)" opacity="0.21"/><rect x="71" y="390" width="1" height="2.4" fill="rgb(156,177,209)" opacity="0.30"/><rect x="7" y="364" width="1" height="2.8" fill="rgb(176,199,235)" opacity="0.40"/><rect x="289" y="523" width="1" height="2.8" fill="rgb(147,161,184)" opacity="0.15"/><rect x="160" y="274" width="1" height="2.4" fill="rgb(237,225,213)" opacity="0.21"/><rect x="150" y="193" width="1" height="2.4" fill="rgb(191,181,171)" opacity="0.37"/><rect x="276" y="559" width="1" height="2.0" fill="rgb(161,182,215)" opacity="0.15"/><rect x="86" y="585" width="1" height="1.6" fill="rgb(181,171,162)" opacity="0.24"/><rect x="134" y="205" width="1" height="2.8" fill="rgb(128,140,160)" opacity="0.22"/><rect x="128" y="538" width="1" height="2.8" fill="rgb(133,151,178)" opacity="0.32"/><rect x="96" y="212" width="1" height="2.4" fill="rgb(153,174,205)" opacity="0.40"/><rect x="187" y="470" width="1" height="1.6" fill="rgb(189,208,237)" opacity="0.17"/><rect x="56" y="382" width="1" height="1.6" fill="rgb(205,205,205)" opacity="0.34"/><rect x="107" y="155" width="1" height="1.6" fill="rgb(189,179,170)" opacity="0.34"/><rect x="188" y="244" width="1" height="2.4" fill="rgb(148,162,185)" opacity="0.37"/><rect x="114" y="548" width="1" height="2.0" fill="rgb(239,239,239)" opacity="0.29"/><rect x="129" y="307" width="1" height="2.4" fill="rgb(168,184,210)" opacity="0.40"/><rect x="326" y="146" width="1" height="2.8" fill="rgb(231,231,231)" opacity="0.23"/><rect x="156" y="524" width="1" height="1.6" fill="rgb(229,217,206)" opacity="0.24"/><rect x="194" y="145" width="1" height="2.8" fill="rgb(199,199,199)" opacity="0.19"/><rect x="119" y="153" width="1" height="2.4" fill="rgb(202,191,181)" opacity="0.35"/><rect x="3" y="374" width="1" height="1.6" fill="rgb(182,172,163)" opacity="0.26"/><rect x="186" y="285" width="1" height="2.8" fill="rgb(161,161,161)" opacity="0.20"/><rect x="309" y="545" width="1" height="2.8" fill="rgb(175,175,175)" opacity="0.17"/><rect x="200" y="304" width="1" height="2.0" fill="rgb(234,234,234)" opacity="0.34"/><rect x="53" y="218" width="1" height="2.4" fill="rgb(128,140,160)" opacity="0.30"/><rect x="321" y="384" width="1" height="2.8" fill="rgb(209,198,188)" opacity="0.33"/><rect x="259" y="401" width="1" height="2.0" fill="rgb(168,184,210)" opacity="0.24"/><rect x="104" y="465" width="1" height="2.0" fill="rgb(135,148,169)" opacity="0.27"/><rect x="310" y="535" width="1" height="2.8" fill="rgb(160,152,144)" opacity="0.17"/><rect x="215" y="350" width="1" height="2.8" fill="rgb(232,220,208)" opacity="0.33"/><rect x="42" y="470" width="1" height="2.4" fill="rgb(198,198,198)" opacity="0.13"/><rect x="47" y="246" width="1" height="1.6" fill="rgb(199,189,179)" opacity="0.26"/><rect x="76" y="216" width="1" height="2.4" fill="rgb(225,213,202)" opacity="0.35"/><rect x="203" y="585" width="1" height="1.6" fill="rgb(158,150,142)" opacity="0.32"/><rect x="289" y="472" width="1" height="2.4" fill="rgb(128,141,161)" opacity="0.15"/><rect x="337" y="354" width="1" height="2.4" fill="rgb(177,201,237)" opacity="0.19"/><rect x="231" y="217" width="1" height="1.6" fill="rgb(120,136,160)" opacity="0.37"/><rect x="280" y="390" width="1" height="1.6" fill="rgb(163,163,163)" opacity="0.31"/><rect x="258" y="439" width="1" height="1.6" fill="rgb(141,155,177)" opacity="0.38"/><rect x="304" y="366" width="1" height="2.4" fill="rgb(215,215,215)" opacity="0.38"/><rect x="336" y="285" width="1" height="2.8" fill="rgb(151,166,189)" opacity="0.25"/><rect x="97" y="522" width="1" height="1.6" fill="rgb(114,130,153)" opacity="0.39"/><rect x="85" y="254" width="1" height="2.8" fill="rgb(233,221,209)" opacity="0.34"/><rect x="26" y="281" width="1" height="2.0" fill="rgb(122,134,153)" opacity="0.22"/><rect x="59" y="435" width="1" height="1.6" fill="rgb(208,208,208)" opacity="0.23"/><rect x="66" y="321" width="1" height="2.4" fill="rgb(184,203,231)" opacity="0.14"/><rect x="27" y="254" width="1" height="2.4" fill="rgb(150,165,188)" opacity="0.24"/><rect x="279" y="633" width="1" height="1.6" fill="rgb(123,140,165)" opacity="0.41"/><rect x="70" y="338" width="1" height="2.8" fill="rgb(162,162,162)" opacity="0.15"/><rect x="216" y="578" width="1" height="2.8" fill="rgb(238,226,214)" opacity="0.29"/><rect x="71" y="630" width="1" height="2.0" fill="rgb(176,193,220)" opacity="0.15"/><rect x="235" y="513" width="1" height="2.0" fill="rgb(196,186,176)" opacity="0.14"/><rect x="280" y="624" width="1" height="2.0" fill="rgb(158,158,158)" opacity="0.31"/><rect x="248" y="363" width="1" height="2.4" fill="rgb(208,197,187)" opacity="0.19"/><rect x="332" y="480" width="1" height="2.8" fill="rgb(166,166,166)" opacity="0.13"/><rect x="110" y="557" width="1" height="2.0" fill="rgb(185,204,232)" opacity="0.17"/><rect x="242" y="557" width="1" height="2.4" fill="rgb(130,147,174)" opacity="0.31"/><rect x="126" y="593" width="1" height="2.4" fill="rgb(122,134,153)" opacity="0.30"/><rect x="269" y="489" width="1" height="2.0" fill="rgb(113,128,151)" opacity="0.12"/><rect x="253" y="561" width="1" height="2.0" fill="rgb(208,208,208)" opacity="0.19"/><rect x="21" y="258" width="1" height="2.0" fill="rgb(175,166,157)" opacity="0.41"/><rect x="135" y="314" width="1" height="2.8" fill="rgb(160,160,160)" opacity="0.19"/><rect x="279" y="315" width="1" height="2.4" fill="rgb(179,203,239)" opacity="0.29"/><rect x="126" y="607" width="1" height="2.4" fill="rgb(164,155,147)" opacity="0.25"/><rect x="20" y="561" width="1" height="2.4" fill="rgb(215,204,193)" opacity="0.35"/><rect x="107" y="492" width="1" height="2.0" fill="rgb(166,183,208)" opacity="0.30"/><rect x="135" y="234" width="1" height="2.0" fill="rgb(175,175,175)" opacity="0.36"/><rect x="191" y="442" width="1" height="2.4" fill="rgb(166,166,166)" opacity="0.28"/><rect x="324" y="424" width="1" height="2.8" fill="rgb(173,164,155)" opacity="0.18"/><rect x="103" y="207" width="1" height="2.8" fill="rgb(202,202,202)" opacity="0.17"/><rect x="253" y="567" width="1" height="2.8" fill="rgb(216,216,216)" opacity="0.14"/><rect x="273" y="285" width="1" height="2.8" fill="rgb(209,209,209)" opacity="0.37"/><rect x="138" y="570" width="1" height="2.4" fill="rgb(226,226,226)" opacity="0.15"/><rect x="332" y="151" width="1" height="2.0" fill="rgb(219,219,219)" opacity="0.13"/><rect x="33" y="289" width="1" height="1.6" fill="rgb(161,177,202)" opacity="0.41"/><rect x="167" y="626" width="1" height="2.4" fill="rgb(158,150,142)" opacity="0.18"/><rect x="279" y="530" width="1" height="2.4" fill="rgb(150,170,201)" opacity="0.39"/><rect x="187" y="404" width="1" height="2.0" fill="rgb(152,152,152)" opacity="0.15"/><rect x="290" y="320" width="1" height="2.0" fill="rgb(172,189,215)" opacity="0.26"/><rect x="45" y="519" width="1" height="2.4" fill="rgb(119,135,159)" opacity="0.19"/><rect x="244" y="323" width="1" height="2.8" fill="rgb(189,179,170)" opacity="0.37"/><rect x="124" y="630" width="1" height="2.0" fill="rgb(229,217,206)" opacity="0.30"/><rect x="236" y="263" width="1" height="2.8" fill="rgb(178,202,238)" opacity="0.31"/><rect x="159" y="161" width="1" height="2.4" fill="rgb(217,206,195)" opacity="0.35"/><rect x="151" y="584" width="1" height="2.0" fill="rgb(239,227,215)" opacity="0.38"/><rect x="78" y="529" width="1" height="2.0" fill="rgb(177,201,237)" opacity="0.22"/><rect x="211" y="290" width="1" height="2.8" fill="rgb(178,178,178)" opacity="0.30"/><rect x="280" y="381" width="1" height="1.6" fill="rgb(200,190,180)" opacity="0.25"/><rect x="164" y="212" width="1" height="2.8" fill="rgb(134,147,168)" opacity="0.15"/><rect x="264" y="586" width="1" height="2.8" fill="rgb(168,159,151)" opacity="0.37"/><rect x="177" y="610" width="1" height="2.0" fill="rgb(169,169,169)" opacity="0.30"/><rect x="113" y="509" width="1" height="1.6" fill="rgb(159,180,212)" opacity="0.36"/><rect x="72" y="614" width="1" height="2.4" fill="rgb(190,180,171)" opacity="0.18"/><rect x="279" y="313" width="1" height="2.4" fill="rgb(154,175,206)" opacity="0.28"/><rect x="125" y="550" width="1" height="2.4" fill="rgb(176,176,176)" opacity="0.26"/><rect x="323" y="305" width="1" height="2.4" fill="rgb(201,190,180)" opacity="0.34"/><rect x="126" y="385" width="1" height="2.8" fill="rgb(163,154,146)" opacity="0.14"/><rect x="300" y="631" width="1" height="2.0" fill="rgb(167,183,209)" opacity="0.22"/><rect x="69" y="573" width="1" height="2.0" fill="rgb(139,158,186)" opacity="0.27"/><rect x="236" y="583" width="1" height="2.8" fill="rgb(228,228,228)" opacity="0.14"/><rect x="226" y="370" width="1" height="2.8" fill="rgb(157,178,210)" opacity="0.29"/><rect x="328" y="250" width="1" height="1.6" fill="rgb(117,133,157)" opacity="0.34"/><rect x="184" y="486" width="1" height="2.0" fill="rgb(153,168,192)" opacity="0.25"/><rect x="90" y="582" width="1" height="2.8" fill="rgb(156,177,209)" opacity="0.31"/><rect x="166" y="278" width="1" height="2.0" fill="rgb(219,219,219)" opacity="0.30"/><rect x="31" y="210" width="1" height="2.8" fill="rgb(198,198,198)" opacity="0.18"/><rect x="188" y="613" width="1" height="1.6" fill="rgb(150,150,150)" opacity="0.23"/><rect x="111" y="478" width="1" height="2.8" fill="rgb(165,187,221)" opacity="0.42"/><rect x="25" y="569" width="1" height="2.4" fill="rgb(232,220,208)" opacity="0.22"/><rect x="147" y="359" width="1" height="2.8" fill="rgb(183,201,229)" opacity="0.25"/><rect x="130" y="190" width="1" height="2.4" fill="rgb(148,162,185)" opacity="0.15"/><rect x="15" y="530" width="1" height="1.6" fill="rgb(171,171,171)" opacity="0.19"/><rect x="114" y="218" width="1" height="2.8" fill="rgb(206,206,206)" opacity="0.17"/><rect x="135" y="576" width="1" height="1.6" fill="rgb(200,200,200)" opacity="0.40"/><rect x="326" y="391" width="1" height="2.4" fill="rgb(233,221,209)" opacity="0.34"/><rect x="206" y="423" width="1" height="2.0" fill="rgb(133,146,167)" opacity="0.38"/><rect x="245" y="566" width="1" height="2.8" fill="rgb(122,134,153)" opacity="0.42"/><rect x="154" y="320" width="1" height="1.6" fill="rgb(231,219,207)" opacity="0.30"/><rect x="302" y="494" width="1" height="2.4" fill="rgb(184,184,184)" opacity="0.40"/><rect x="173" y="551" width="1" height="2.4" fill="rgb(181,171,162)" opacity="0.28"/><rect x="176" y="423" width="1" height="2.4" fill="rgb(165,187,220)" opacity="0.25"/><rect x="295" y="513" width="1" height="2.8" fill="rgb(120,136,161)" opacity="0.40"/><rect x="142" y="477" width="1" height="2.8" fill="rgb(206,195,185)" opacity="0.39"/><rect x="284" y="553" width="1" height="1.6" fill="rgb(152,168,191)" opacity="0.40"/><rect x="26" y="227" width="1" height="2.0" fill="rgb(210,210,210)" opacity="0.27"/><rect x="301" y="634" width="1" height="2.8" fill="rgb(128,145,171)" opacity="0.35"/><rect x="335" y="231" width="1" height="2.8" fill="rgb(116,131,155)" opacity="0.24"/><rect x="305" y="436" width="1" height="2.4" fill="rgb(181,181,181)" opacity="0.42"/><rect x="67" y="228" width="1" height="2.0" fill="rgb(119,135,159)" opacity="0.40"/><rect x="269" y="526" width="1" height="2.8" fill="rgb(150,165,188)" opacity="0.21"/><rect x="134" y="184" width="1" height="2.0" fill="rgb(146,165,195)" opacity="0.40"/><rect x="281" y="448" width="1" height="2.0" fill="rgb(171,162,153)" opacity="0.18"/><rect x="312" y="635" width="1" height="2.4" fill="rgb(144,164,193)" opacity="0.15"/><rect x="295" y="232" width="1" height="1.6" fill="rgb(177,177,177)" opacity="0.34"/><rect x="218" y="568" width="1" height="1.6" fill="rgb(148,163,186)" opacity="0.21"/><rect x="203" y="566" width="1" height="2.8" fill="rgb(172,172,172)" opacity="0.28"/><rect x="148" y="298" width="1" height="2.4" fill="rgb(155,175,207)" opacity="0.31"/><rect x="327" y="612" width="1" height="2.0" fill="rgb(228,228,228)" opacity="0.13"/><rect x="314" y="253" width="1" height="2.4" fill="rgb(190,190,190)" opacity="0.34"/><rect x="51" y="459" width="1" height="1.6" fill="rgb(183,183,183)" opacity="0.20"/><rect x="308" y="389" width="1" height="2.0" fill="rgb(117,133,157)" opacity="0.25"/><rect x="10" y="262" width="1" height="2.8" fill="rgb(187,177,168)" opacity="0.22"/><rect x="30" y="225" width="1" height="2.0" fill="rgb(120,136,161)" opacity="0.34"/><rect x="308" y="327" width="1" height="2.0" fill="rgb(194,194,194)" opacity="0.34"/><rect x="80" y="505" width="1" height="1.6" fill="rgb(162,183,216)" opacity="0.21"/>
 <!-- salmon sun -->
 <circle cx="81" cy="203" r="112" fill="#fff"/>
 <circle cx="81" cy="203" r="110" fill="#fe966e"/>
 <!-- right ring -->
 <ellipse cx="350" cy="318" rx="75" ry="49" fill="none" stroke="#9a9cc0" stroke-width="1.4"/>
 <ellipse cx="352" cy="318" rx="68" ry="43" fill="none" stroke="#4a4c66" stroke-width="1"/>
 <ellipse cx="343" cy="312" rx="9" ry="16" fill="#d8d4cc"/>
 <ellipse cx="341" cy="382" rx="10" ry="14" fill="#cfcac0"/>
 <!-- saturn ring -->
 <ellipse cx="176.5" cy="360" rx="91.5" ry="58" fill="#25262c"/>
 <ellipse cx="177" cy="358" rx="84" ry="50" fill="#34353c"/>
 <ellipse cx="178" cy="359" rx="72" ry="42" fill="#2a2b31"/>
 <ellipse cx="179" cy="360.6" rx="60" ry="34" fill="#0e1016"/>
 <path d="M141 398 Q176 412 225 400" fill="none" stroke="#8a8ca0" stroke-width="1.2" opacity="0.7"/>
 <circle cx="175.6" cy="353.5" r="38.5" fill="url(#sat)"/>
 <ellipse cx="175" cy="323" rx="12" ry="6" fill="#a8a8ba" opacity="0.8"/>
 <path d="M157.7 380.4 Q168 372 177.3 383.4 M186.5 382.8 Q200 368 220 369.6" fill="none" stroke="#0a0a0a" stroke-width="2.6"/>
 <!-- planets -->
 <circle cx="208.4" cy="306.4" r="18.3" fill="url(#grn)"/>
 <path d="M120 350 Q128 360 124 372 L118 372Z" fill="#6a8ac8"/>
 <circle cx="97.2" cy="343.2" r="17.5" fill="url(#pur)"/>
 <path d="M93 358 L100 378 L104 376 L99 358Z" fill="#5a78c0"/>
 <path d="M238.4 352 Q238 337 253.6 337 Q269 337 268.9 352 Q262 356 253.6 355 Q245 356 238.4 352Z" fill="url(#red)"/>
 <path d="M251 355 L256 355 L254 370 L251 368Z" fill="#c85060"/>
 <circle cx="29" cy="380" r="16" fill="url(#lbl)"/>
 <ellipse cx="18" cy="402" rx="6" ry="4" fill="#6aa4e0"/><ellipse cx="42" cy="402" rx="8" ry="5" fill="#6aa4e0"/>
 <rect x="22" y="390" width="3" height="9" fill="#111"/><rect x="32" y="390" width="3" height="9" fill="#111"/>
 <!-- gizmo -->
 <ellipse cx="-6" cy="424" rx="17" ry="38" fill="none" stroke="#f0e000" stroke-width="2"/>
 <ellipse cx="-9" cy="424" rx="17" ry="38" fill="none" stroke="#1010d0" stroke-width="2"/>
 <path d="M0 413 L40 405" stroke="#e01010" stroke-width="2"/>
 <path d="M36 398 L50 402 L39 411Z" fill="#e01010"/>
</svg>
</div>

<!-- VIEWPORT 2 -->
<div class="a" style="left:343px;top:137px;width:337px;height:503px;overflow:hidden;background:#000">
<svg width="337" height="503" viewBox="343 137 337 503" style="position:absolute;left:0;top:0">
 <defs>
  <filter id="c16" filterUnits="userSpaceOnUse" x="-200" y="0" width="1100" height="900"><feGaussianBlur stdDeviation="14"/></filter>
  <filter id="c8" filterUnits="userSpaceOnUse" x="-200" y="0" width="1100" height="900"><feGaussianBlur stdDeviation="7"/></filter>
  <filter id="dust2" color-interpolation-filters="sRGB" filterUnits="userSpaceOnUse" x="343" y="293" width="337" height="190"><feGaussianBlur in="SourceGraphic" stdDeviation="5" result="m"/><feTurbulence type="fractalNoise" baseFrequency="0.07 0.05" numOctaves="3" seed="9" result="n"/><feColorMatrix in="n" type="matrix" values="0 0 0 0 0.13 0 0 0 0 0.11 0 0 0 0 0.10 0 0 0 2.3 -0.9" result="d"/><feComposite in="d" in2="m" operator="in"/></filter>
  <filter id="c4" filterUnits="userSpaceOnUse" x="-200" y="0" width="1100" height="900"><feGaussianBlur stdDeviation="3.5"/></filter>
  <filter id="c2" filterUnits="userSpaceOnUse" x="-200" y="0" width="1100" height="900"><feGaussianBlur stdDeviation="1.5"/></filter>
  <clipPath id="sp"><rect x="343" y="293" width="337" height="189"/></clipPath>
  <radialGradient id="brh"><stop offset="0" stop-color="#2a2222" stop-opacity="0.9"/><stop offset="1" stop-color="#2a2222" stop-opacity="0"/></radialGradient>
  <radialGradient id="gh"><stop offset="0" stop-color="#3a4038" stop-opacity="0.55"/><stop offset="1" stop-color="#3a4038" stop-opacity="0"/></radialGradient>
  <radialGradient id="sat2" cx="45%" cy="25%" r="80%"><stop offset="0" stop-color="#bdbac2"/><stop offset="0.6" stop-color="#b0aca8"/><stop offset="1" stop-color="#8c8a94"/></radialGradient>
  <radialGradient id="ura" cx="45%" cy="25%" r="80%"><stop offset="0" stop-color="#cfcab4"/><stop offset="0.6" stop-color="#d6d2c8"/><stop offset="1" stop-color="#e8e6e0"/></radialGradient>
 </defs>
 <g clip-path="url(#sp)">
  <rect x="343" y="293" width="337" height="189" fill="#06080e"/>
  <ellipse cx="650" cy="320" rx="80" ry="60" fill="url(#brh)"/>
  <g filter="url(#c16)">
   <path d="M478 500 L490 450 L520 405 L560 380 L610 380 L600 420 L575 500Z" fill="#3a4452"/>
  </g>
  <g filter="url(#c8)">
   <path d="M488 500 L495 460 L510 430 L525 420 L520 455 L508 500Z" fill="#6a7a90" opacity="0.9"/>
   <path d="M530 500 L540 460 L560 420 L585 395 L600 410 L590 440 L565 500Z" fill="#747c88" opacity="0.8"/>
  </g>
  <g filter="url(#c4)">
   <path d="M506 500 L512 465 L530 430 L555 400 L580 388 L570 410 L550 440 L535 470 L526 500Z" fill="#221e1e" opacity="0.45"/>
  </g>
  <g filter="url(#dust2)"><path d="M498 500 L505 465 L522 430 L550 395 L585 380 L590 400 L560 440 L545 470 L536 500Z" fill="#000"/></g>
  <ellipse cx="590" cy="385" rx="55" ry="30" fill="url(#gh)"/>
  <rect x="665" y="472" width="1" height="1.6" fill="rgb(157,157,157)" opacity="0.15"/><rect x="400" y="446" width="1" height="2.0" fill="rgb(141,160,189)" opacity="0.21"/><rect x="539" y="323" width="1" height="2.4" fill="rgb(205,194,184)" opacity="0.24"/><rect x="493" y="344" width="1" height="2.4" fill="rgb(154,154,154)" opacity="0.14"/><rect x="450" y="365" width="1" height="2.0" fill="rgb(173,190,217)" opacity="0.17"/><rect x="351" y="354" width="1" height="2.0" fill="rgb(125,141,167)" opacity="0.35"/><rect x="493" y="371" width="1" height="2.4" fill="rgb(162,184,217)" opacity="0.33"/><rect x="632" y="377" width="1" height="2.0" fill="rgb(201,190,180)" opacity="0.41"/><rect x="655" y="388" width="1" height="2.8" fill="rgb(195,185,175)" opacity="0.41"/><rect x="588" y="398" width="1" height="2.0" fill="rgb(208,197,187)" opacity="0.38"/><rect x="618" y="451" width="1" height="2.8" fill="rgb(171,193,228)" opacity="0.23"/><rect x="666" y="426" width="1" height="2.4" fill="rgb(214,203,192)" opacity="0.17"/><rect x="508" y="362" width="1" height="2.4" fill="rgb(237,237,237)" opacity="0.21"/><rect x="649" y="329" width="1" height="1.6" fill="rgb(163,163,163)" opacity="0.26"/><rect x="419" y="458" width="1" height="2.4" fill="rgb(130,143,163)" opacity="0.28"/><rect x="414" y="459" width="1" height="1.6" fill="rgb(204,204,204)" opacity="0.28"/><rect x="401" y="420" width="1" height="1.6" fill="rgb(160,160,160)" opacity="0.23"/><rect x="589" y="297" width="1" height="2.0" fill="rgb(145,160,182)" opacity="0.38"/><rect x="519" y="293" width="1" height="2.0" fill="rgb(225,225,225)" opacity="0.21"/><rect x="355" y="358" width="1" height="2.4" fill="rgb(228,228,228)" opacity="0.26"/><rect x="353" y="378" width="1" height="2.4" fill="rgb(227,227,227)" opacity="0.39"/><rect x="634" y="426" width="1" height="1.6" fill="rgb(168,184,210)" opacity="0.36"/><rect x="450" y="312" width="1" height="2.8" fill="rgb(165,182,207)" opacity="0.21"/><rect x="454" y="458" width="1" height="2.4" fill="rgb(144,164,193)" opacity="0.19"/><rect x="484" y="296" width="1" height="1.6" fill="rgb(176,194,221)" opacity="0.36"/><rect x="387" y="325" width="1" height="1.6" fill="rgb(166,183,208)" opacity="0.12"/><rect x="421" y="377" width="1" height="2.0" fill="rgb(182,182,182)" opacity="0.16"/><rect x="613" y="427" width="1" height="2.4" fill="rgb(182,172,163)" opacity="0.28"/><rect x="345" y="300" width="1" height="1.6" fill="rgb(161,177,202)" opacity="0.28"/><rect x="373" y="312" width="1" height="2.0" fill="rgb(121,133,152)" opacity="0.17"/><rect x="351" y="420" width="1" height="2.8" fill="rgb(156,176,208)" opacity="0.14"/><rect x="649" y="475" width="1" height="1.6" fill="rgb(205,194,184)" opacity="0.18"/><rect x="360" y="372" width="1" height="1.6" fill="rgb(173,190,217)" opacity="0.35"/><rect x="505" y="297" width="1" height="2.4" fill="rgb(123,140,165)" opacity="0.26"/><rect x="657" y="351" width="1" height="1.6" fill="rgb(237,225,213)" opacity="0.41"/><rect x="410" y="440" width="1" height="1.6" fill="rgb(152,144,136)" opacity="0.36"/><rect x="507" y="332" width="1" height="1.6" fill="rgb(225,225,225)" opacity="0.41"/><rect x="469" y="470" width="1" height="2.8" fill="rgb(127,139,159)" opacity="0.13"/><rect x="536" y="367" width="1" height="2.4" fill="rgb(167,183,209)" opacity="0.18"/><rect x="384" y="316" width="1" height="2.8" fill="rgb(120,136,160)" opacity="0.12"/><rect x="576" y="298" width="1" height="1.6" fill="rgb(234,222,210)" opacity="0.25"/><rect x="511" y="361" width="1" height="2.4" fill="rgb(166,183,208)" opacity="0.22"/><rect x="520" y="383" width="1" height="2.4" fill="rgb(203,192,182)" opacity="0.14"/><rect x="396" y="406" width="1" height="1.6" fill="rgb(220,209,198)" opacity="0.28"/><rect x="619" y="311" width="1" height="2.0" fill="rgb(156,171,195)" opacity="0.15"/><rect x="646" y="444" width="1" height="2.0" fill="rgb(237,237,237)" opacity="0.21"/><rect x="475" y="427" width="1" height="2.8" fill="rgb(177,201,237)" opacity="0.19"/><rect x="440" y="322" width="1" height="2.4" fill="rgb(204,204,204)" opacity="0.36"/><rect x="584" y="342" width="1" height="2.0" fill="rgb(170,161,153)" opacity="0.25"/><rect x="678" y="441" width="1" height="2.8" fill="rgb(178,196,223)" opacity="0.20"/><rect x="353" y="405" width="1" height="1.6" fill="rgb(173,164,155)" opacity="0.13"/><rect x="479" y="427" width="1" height="2.4" fill="rgb(202,191,181)" opacity="0.25"/><rect x="454" y="434" width="1" height="2.0" fill="rgb(234,234,234)" opacity="0.31"/><rect x="406" y="447" width="1" height="2.4" fill="rgb(198,198,198)" opacity="0.32"/><rect x="583" y="460" width="1" height="1.6" fill="rgb(186,205,233)" opacity="0.39"/><rect x="661" y="431" width="1" height="2.0" fill="rgb(227,215,204)" opacity="0.36"/><rect x="377" y="447" width="1" height="2.0" fill="rgb(131,148,175)" opacity="0.19"/><rect x="549" y="295" width="1" height="2.8" fill="rgb(236,224,212)" opacity="0.16"/><rect x="534" y="381" width="1" height="2.4" fill="rgb(176,176,176)" opacity="0.35"/><rect x="507" y="451" width="1" height="2.8" fill="rgb(234,234,234)" opacity="0.36"/><rect x="654" y="380" width="1" height="1.6" fill="rgb(214,203,192)" opacity="0.27"/><rect x="550" y="359" width="1" height="2.0" fill="rgb(150,170,201)" opacity="0.37"/><rect x="511" y="481" width="1" height="2.0" fill="rgb(177,200,236)" opacity="0.29"/><rect x="531" y="476" width="1" height="2.8" fill="rgb(196,196,196)" opacity="0.20"/><rect x="412" y="421" width="1" height="2.8" fill="rgb(170,187,213)" opacity="0.17"/><rect x="583" y="350" width="1" height="2.4" fill="rgb(137,155,183)" opacity="0.13"/><rect x="663" y="352" width="1" height="1.6" fill="rgb(232,220,208)" opacity="0.31"/><rect x="414" y="406" width="1" height="2.4" fill="rgb(169,169,169)" opacity="0.39"/><rect x="663" y="399" width="1" height="1.6" fill="rgb(162,183,216)" opacity="0.39"/><rect x="381" y="448" width="1" height="2.0" fill="rgb(148,168,198)" opacity="0.26"/><rect x="369" y="379" width="1" height="2.8" fill="rgb(171,162,153)" opacity="0.32"/><rect x="498" y="318" width="1" height="2.4" fill="rgb(164,181,206)" opacity="0.40"/><rect x="377" y="338" width="1" height="2.0" fill="rgb(130,147,174)" opacity="0.36"/><rect x="611" y="337" width="1" height="2.8" fill="rgb(220,209,198)" opacity="0.30"/><rect x="596" y="346" width="1" height="2.8" fill="rgb(169,192,226)" opacity="0.24"/><rect x="636" y="470" width="1" height="2.4" fill="rgb(187,187,187)" opacity="0.28"/><rect x="506" y="342" width="1" height="2.8" fill="rgb(195,185,175)" opacity="0.17"/><rect x="654" y="353" width="1" height="1.6" fill="rgb(158,174,198)" opacity="0.17"/><rect x="399" y="308" width="1" height="1.6" fill="rgb(233,221,209)" opacity="0.33"/><rect x="423" y="451" width="1" height="2.8" fill="rgb(149,169,199)" opacity="0.42"/><rect x="394" y="353" width="1" height="2.0" fill="rgb(213,213,213)" opacity="0.28"/><rect x="455" y="320" width="1" height="1.6" fill="rgb(147,166,196)" opacity="0.24"/><rect x="426" y="338" width="1" height="2.4" fill="rgb(228,228,228)" opacity="0.23"/><rect x="561" y="409" width="1" height="1.6" fill="rgb(134,147,168)" opacity="0.26"/><rect x="605" y="318" width="1" height="2.4" fill="rgb(216,216,216)" opacity="0.36"/><rect x="582" y="474" width="1" height="2.8" fill="rgb(179,179,179)" opacity="0.26"/><rect x="508" y="458" width="1" height="2.8" fill="rgb(219,219,219)" opacity="0.41"/><rect x="626" y="379" width="1" height="2.8" fill="rgb(202,191,181)" opacity="0.17"/><rect x="379" y="481" width="1" height="2.0" fill="rgb(166,166,166)" opacity="0.21"/><rect x="446" y="444" width="1" height="1.6" fill="rgb(113,128,151)" opacity="0.28"/><rect x="417" y="298" width="1" height="2.4" fill="rgb(204,204,204)" opacity="0.24"/><rect x="562" y="302" width="1" height="1.6" fill="rgb(168,184,210)" opacity="0.38"/><rect x="531" y="319" width="1" height="1.6" fill="rgb(214,214,214)" opacity="0.37"/><rect x="653" y="448" width="1" height="2.0" fill="rgb(162,183,216)" opacity="0.40"/><rect x="509" y="318" width="1" height="1.6" fill="rgb(131,144,164)" opacity="0.30"/><rect x="612" y="409" width="1" height="2.4" fill="rgb(230,218,207)" opacity="0.13"/><rect x="632" y="464" width="1" height="1.6" fill="rgb(173,190,217)" opacity="0.29"/><rect x="394" y="474" width="1" height="2.0" fill="rgb(172,163,154)" opacity="0.28"/><rect x="488" y="374" width="1" height="2.4" fill="rgb(150,170,200)" opacity="0.27"/><rect x="533" y="382" width="1" height="2.4" fill="rgb(186,176,167)" opacity="0.20"/><rect x="580" y="425" width="1" height="1.6" fill="rgb(234,234,234)" opacity="0.33"/><rect x="596" y="333" width="1" height="2.0" fill="rgb(200,200,200)" opacity="0.39"/><rect x="593" y="426" width="1" height="2.0" fill="rgb(210,210,210)" opacity="0.15"/><rect x="545" y="300" width="1" height="2.0" fill="rgb(175,175,175)" opacity="0.32"/><rect x="526" y="328" width="1" height="2.4" fill="rgb(161,152,144)" opacity="0.23"/><rect x="396" y="354" width="1" height="2.8" fill="rgb(185,185,185)" opacity="0.27"/><rect x="568" y="299" width="1" height="2.4" fill="rgb(188,188,188)" opacity="0.39"/><rect x="348" y="372" width="1" height="2.0" fill="rgb(183,173,164)" opacity="0.41"/><rect x="386" y="325" width="1" height="2.4" fill="rgb(207,196,186)" opacity="0.31"/><rect x="549" y="409" width="1" height="2.8" fill="rgb(224,212,201)" opacity="0.18"/><rect x="501" y="401" width="1" height="2.0" fill="rgb(189,189,189)" opacity="0.40"/><rect x="554" y="382" width="1" height="2.4" fill="rgb(182,200,228)" opacity="0.17"/><rect x="523" y="449" width="1" height="1.6" fill="rgb(162,162,162)" opacity="0.23"/><rect x="449" y="353" width="1" height="2.8" fill="rgb(136,154,182)" opacity="0.37"/><rect x="502" y="428" width="1" height="2.0" fill="rgb(148,163,186)" opacity="0.21"/><rect x="548" y="364" width="1" height="2.4" fill="rgb(158,150,142)" opacity="0.20"/><rect x="510" y="444" width="1" height="2.4" fill="rgb(144,158,180)" opacity="0.40"/><rect x="632" y="336" width="1" height="2.8" fill="rgb(171,194,229)" opacity="0.40"/><rect x="422" y="333" width="1" height="2.0" fill="rgb(117,133,157)" opacity="0.22"/><rect x="552" y="367" width="1" height="2.8" fill="rgb(205,205,205)" opacity="0.24"/><rect x="503" y="365" width="1" height="2.0" fill="rgb(141,155,177)" opacity="0.20"/><rect x="520" y="460" width="1" height="1.6" fill="rgb(227,227,227)" opacity="0.16"/><rect x="488" y="337" width="1" height="2.4" fill="rgb(184,184,184)" opacity="0.20"/><rect x="518" y="441" width="1" height="2.8" fill="rgb(224,224,224)" opacity="0.41"/><rect x="418" y="298" width="1" height="2.0" fill="rgb(211,211,211)" opacity="0.14"/><rect x="413" y="339" width="1" height="2.4" fill="rgb(124,137,156)" opacity="0.19"/><rect x="377" y="398" width="1" height="2.8" fill="rgb(128,141,161)" opacity="0.18"/><rect x="354" y="390" width="1" height="1.6" fill="rgb(184,174,165)" opacity="0.14"/><rect x="463" y="357" width="1" height="1.6" fill="rgb(121,137,162)" opacity="0.28"/><rect x="460" y="443" width="1" height="2.8" fill="rgb(173,196,231)" opacity="0.34"/><rect x="515" y="476" width="1" height="2.4" fill="rgb(153,153,153)" opacity="0.37"/><rect x="556" y="359" width="1" height="1.6" fill="rgb(218,218,218)" opacity="0.31"/><rect x="514" y="439" width="1" height="2.0" fill="rgb(204,193,183)" opacity="0.37"/><rect x="398" y="302" width="1" height="2.0" fill="rgb(168,191,225)" opacity="0.12"/><rect x="648" y="301" width="1" height="2.8" fill="rgb(144,159,181)" opacity="0.20"/><rect x="464" y="469" width="1" height="2.0" fill="rgb(126,139,158)" opacity="0.41"/><rect x="378" y="424" width="1" height="2.0" fill="rgb(120,136,160)" opacity="0.14"/><rect x="517" y="393" width="1" height="2.0" fill="rgb(201,190,180)" opacity="0.20"/><rect x="387" y="432" width="1" height="2.8" fill="rgb(124,137,156)" opacity="0.26"/><rect x="545" y="448" width="1" height="2.0" fill="rgb(232,220,208)" opacity="0.20"/><rect x="677" y="454" width="1" height="2.4" fill="rgb(168,168,168)" opacity="0.28"/><rect x="672" y="414" width="1" height="2.8" fill="rgb(166,188,222)" opacity="0.13"/><rect x="406" y="375" width="1" height="1.6" fill="rgb(133,151,178)" opacity="0.19"/><rect x="552" y="298" width="1" height="2.8" fill="rgb(188,188,188)" opacity="0.41"/><rect x="574" y="340" width="1" height="2.8" fill="rgb(156,176,208)" opacity="0.16"/><rect x="426" y="453" width="1" height="2.4" fill="rgb(170,161,153)" opacity="0.39"/><rect x="597" y="372" width="1" height="2.8" fill="rgb(171,188,214)" opacity="0.17"/><rect x="545" y="411" width="1" height="2.8" fill="rgb(208,208,208)" opacity="0.42"/><rect x="660" y="427" width="1" height="2.0" fill="rgb(147,166,196)" opacity="0.32"/><rect x="567" y="416" width="1" height="2.8" fill="rgb(202,191,181)" opacity="0.31"/><rect x="586" y="326" width="1" height="2.8" fill="rgb(137,155,183)" opacity="0.16"/><rect x="584" y="476" width="1" height="1.6" fill="rgb(137,155,183)" opacity="0.14"/><rect x="357" y="379" width="1" height="2.4" fill="rgb(164,164,164)" opacity="0.35"/><rect x="450" y="370" width="1" height="2.8" fill="rgb(191,191,191)" opacity="0.17"/><rect x="653" y="377" width="1" height="2.4" fill="rgb(162,162,162)" opacity="0.18"/><rect x="509" y="428" width="1" height="2.4" fill="rgb(156,156,156)" opacity="0.37"/><rect x="563" y="409" width="1" height="2.0" fill="rgb(150,142,135)" opacity="0.38"/><rect x="549" y="324" width="1" height="2.8" fill="rgb(188,178,169)" opacity="0.13"/><rect x="437" y="388" width="1" height="2.0" fill="rgb(167,189,223)" opacity="0.41"/><rect x="468" y="444" width="1" height="2.0" fill="rgb(144,158,180)" opacity="0.28"/><rect x="423" y="456" width="1" height="2.0" fill="rgb(180,198,225)" opacity="0.23"/><rect x="602" y="433" width="1" height="2.0" fill="rgb(186,205,233)" opacity="0.15"/><rect x="548" y="327" width="1" height="2.0" fill="rgb(212,212,212)" opacity="0.24"/><rect x="678" y="334" width="1" height="2.8" fill="rgb(229,229,229)" opacity="0.42"/><rect x="409" y="328" width="1" height="1.6" fill="rgb(200,200,200)" opacity="0.20"/><rect x="382" y="300" width="1" height="2.8" fill="rgb(196,186,176)" opacity="0.16"/><rect x="666" y="326" width="1" height="2.4" fill="rgb(208,208,208)" opacity="0.16"/><rect x="506" y="307" width="1" height="2.4" fill="rgb(162,184,217)" opacity="0.16"/><rect x="527" y="399" width="1" height="2.0" fill="rgb(159,151,143)" opacity="0.23"/><rect x="447" y="468" width="1" height="2.8" fill="rgb(116,131,155)" opacity="0.39"/><rect x="395" y="336" width="1" height="2.4" fill="rgb(171,194,229)" opacity="0.14"/><rect x="560" y="454" width="1" height="1.6" fill="rgb(135,148,169)" opacity="0.18"/><rect x="435" y="363" width="1" height="2.4" fill="rgb(127,139,159)" opacity="0.40"/><rect x="486" y="433" width="1" height="1.6" fill="rgb(189,189,189)" opacity="0.42"/><rect x="393" y="307" width="1" height="2.0" fill="rgb(219,219,219)" opacity="0.41"/><rect x="509" y="372" width="1" height="2.4" fill="rgb(195,185,175)" opacity="0.19"/><rect x="643" y="321" width="1" height="1.6" fill="rgb(164,164,164)" opacity="0.23"/><rect x="462" y="453" width="1" height="2.0" fill="rgb(126,143,169)" opacity="0.41"/><rect x="656" y="401" width="1" height="1.6" fill="rgb(134,152,179)" opacity="0.27"/><rect x="568" y="333" width="1" height="2.4" fill="rgb(233,233,233)" opacity="0.33"/><rect x="511" y="399" width="1" height="1.6" fill="rgb(173,173,173)" opacity="0.21"/><rect x="664" y="320" width="1" height="1.6" fill="rgb(133,151,178)" opacity="0.13"/><rect x="624" y="429" width="1" height="1.6" fill="rgb(137,151,172)" opacity="0.22"/><rect x="449" y="388" width="1" height="2.8" fill="rgb(180,171,162)" opacity="0.34"/><rect x="449" y="302" width="1" height="1.6" fill="rgb(163,154,146)" opacity="0.35"/><rect x="595" y="342" width="1" height="2.4" fill="rgb(176,193,220)" opacity="0.29"/><rect x="358" y="325" width="1" height="2.8" fill="rgb(132,146,166)" opacity="0.26"/><rect x="378" y="350" width="1" height="1.6" fill="rgb(204,193,183)" opacity="0.28"/><rect x="343" y="311" width="1" height="2.8" fill="rgb(123,135,154)" opacity="0.25"/><rect x="611" y="365" width="1" height="2.0" fill="rgb(152,167,190)" opacity="0.28"/><rect x="433" y="342" width="1" height="2.4" fill="rgb(134,152,179)" opacity="0.37"/><rect x="511" y="456" width="1" height="2.8" fill="rgb(149,169,199)" opacity="0.18"/><rect x="614" y="349" width="1" height="2.8" fill="rgb(223,211,200)" opacity="0.30"/><rect x="451" y="307" width="1" height="2.8" fill="rgb(113,128,151)" opacity="0.40"/><rect x="498" y="310" width="1" height="2.4" fill="rgb(214,203,192)" opacity="0.37"/><rect x="417" y="447" width="1" height="2.8" fill="rgb(142,156,178)" opacity="0.17"/><rect x="515" y="329" width="1" height="1.6" fill="rgb(159,175,199)" opacity="0.41"/><rect x="497" y="435" width="1" height="2.0" fill="rgb(120,136,161)" opacity="0.37"/><rect x="608" y="301" width="1" height="2.8" fill="rgb(221,221,221)" opacity="0.17"/><rect x="445" y="481" width="1" height="2.0" fill="rgb(160,176,201)" opacity="0.20"/><rect x="621" y="388" width="1" height="2.4" fill="rgb(136,154,182)" opacity="0.18"/><rect x="561" y="474" width="1" height="1.6" fill="rgb(215,215,215)" opacity="0.14"/><rect x="409" y="354" width="1" height="2.8" fill="rgb(187,187,187)" opacity="0.41"/><rect x="494" y="332" width="1" height="2.4" fill="rgb(182,172,163)" opacity="0.24"/><rect x="640" y="302" width="1" height="2.8" fill="rgb(191,191,191)" opacity="0.38"/><rect x="405" y="423" width="1" height="2.8" fill="rgb(168,185,211)" opacity="0.15"/><rect x="443" y="417" width="1" height="2.8" fill="rgb(172,172,172)" opacity="0.12"/><rect x="365" y="393" width="1" height="1.6" fill="rgb(169,169,169)" opacity="0.38"/><rect x="672" y="416" width="1" height="2.8" fill="rgb(218,207,196)" opacity="0.36"/><rect x="649" y="409" width="1" height="1.6" fill="rgb(168,191,225)" opacity="0.42"/><rect x="369" y="297" width="1" height="2.0" fill="rgb(217,217,217)" opacity="0.33"/><rect x="429" y="296" width="1" height="2.4" fill="rgb(225,225,225)" opacity="0.28"/><rect x="379" y="419" width="1" height="2.8" fill="rgb(188,206,235)" opacity="0.35"/><rect x="416" y="324" width="1" height="1.6" fill="rgb(229,217,206)" opacity="0.15"/><rect x="377" y="404" width="1" height="2.0" fill="rgb(124,137,156)" opacity="0.28"/><rect x="402" y="463" width="1" height="1.6" fill="rgb(120,132,150)" opacity="0.25"/><rect x="560" y="346" width="1" height="2.0" fill="rgb(238,238,238)" opacity="0.16"/><rect x="535" y="474" width="1" height="2.8" fill="rgb(122,138,163)" opacity="0.30"/><rect x="414" y="366" width="1" height="2.0" fill="rgb(150,150,150)" opacity="0.22"/><rect x="534" y="416" width="1" height="1.6" fill="rgb(140,158,187)" opacity="0.27"/><rect x="672" y="481" width="1" height="2.4" fill="rgb(171,188,214)" opacity="0.23"/><rect x="649" y="373" width="1" height="1.6" fill="rgb(226,214,203)" opacity="0.22"/><rect x="406" y="407" width="1" height="1.6" fill="rgb(183,201,229)" opacity="0.23"/><rect x="548" y="384" width="1" height="2.0" fill="rgb(169,160,152)" opacity="0.30"/><rect x="519" y="319" width="1" height="2.4" fill="rgb(175,175,175)" opacity="0.41"/><rect x="490" y="340" width="1" height="2.4" fill="rgb(183,173,164)" opacity="0.40"/><rect x="589" y="450" width="1" height="2.0" fill="rgb(150,150,150)" opacity="0.38"/><rect x="609" y="470" width="1" height="2.0" fill="rgb(142,156,178)" opacity="0.37"/><rect x="354" y="314" width="1" height="2.8" fill="rgb(164,155,147)" opacity="0.21"/><rect x="662" y="435" width="1" height="1.6" fill="rgb(122,134,153)" opacity="0.41"/><rect x="653" y="450" width="1" height="2.4" fill="rgb(120,136,160)" opacity="0.20"/><rect x="674" y="327" width="1" height="2.0" fill="rgb(169,192,226)" opacity="0.16"/><rect x="372" y="422" width="1" height="1.6" fill="rgb(153,153,153)" opacity="0.27"/><rect x="613" y="380" width="1" height="2.0" fill="rgb(152,152,152)" opacity="0.34"/><rect x="455" y="307" width="1" height="1.6" fill="rgb(178,202,238)" opacity="0.22"/><rect x="408" y="373" width="1" height="1.6" fill="rgb(185,175,166)" opacity="0.31"/><rect x="553" y="458" width="1" height="2.0" fill="rgb(158,174,198)" opacity="0.20"/><rect x="508" y="314" width="1" height="1.6" fill="rgb(150,170,200)" opacity="0.41"/><rect x="488" y="430" width="1" height="2.8" fill="rgb(188,206,235)" opacity="0.26"/><rect x="596" y="461" width="1" height="2.4" fill="rgb(234,222,210)" opacity="0.26"/><rect x="440" y="435" width="1" height="2.0" fill="rgb(162,178,203)" opacity="0.28"/><rect x="425" y="315" width="1" height="2.0" fill="rgb(114,130,153)" opacity="0.38"/><rect x="489" y="431" width="1" height="1.6" fill="rgb(188,207,236)" opacity="0.42"/><rect x="413" y="449" width="1" height="2.0" fill="rgb(145,160,182)" opacity="0.28"/><rect x="460" y="309" width="1" height="1.6" fill="rgb(164,180,205)" opacity="0.25"/><rect x="426" y="412" width="1" height="2.0" fill="rgb(184,184,184)" opacity="0.31"/><rect x="415" y="384" width="1" height="2.8" fill="rgb(217,206,195)" opacity="0.14"/><rect x="663" y="300" width="1" height="2.8" fill="rgb(161,177,202)" opacity="0.25"/><rect x="498" y="450" width="1" height="2.4" fill="rgb(136,150,171)" opacity="0.37"/><rect x="392" y="396" width="1" height="1.6" fill="rgb(132,145,165)" opacity="0.35"/><rect x="607" y="409" width="1" height="2.8" fill="rgb(170,192,227)" opacity="0.14"/><rect x="545" y="402" width="1" height="2.0" fill="rgb(166,166,166)" opacity="0.38"/><rect x="651" y="357" width="1" height="2.0" fill="rgb(191,191,191)" opacity="0.24"/><rect x="360" y="361" width="1" height="2.8" fill="rgb(151,143,135)" opacity="0.41"/><rect x="581" y="405" width="1" height="2.4" fill="rgb(203,203,203)" opacity="0.23"/><rect x="517" y="313" width="1" height="2.8" fill="rgb(136,154,182)" opacity="0.18"/><rect x="572" y="381" width="1" height="1.6" fill="rgb(132,150,177)" opacity="0.28"/><rect x="343" y="407" width="1" height="2.8" fill="rgb(225,225,225)" opacity="0.39"/><rect x="485" y="380" width="1" height="2.8" fill="rgb(166,188,222)" opacity="0.25"/><rect x="666" y="341" width="1" height="2.4" fill="rgb(121,133,152)" opacity="0.38"/><rect x="663" y="310" width="1" height="2.4" fill="rgb(165,187,220)" opacity="0.33"/><rect x="457" y="314" width="1" height="2.0" fill="rgb(177,200,236)" opacity="0.23"/><rect x="620" y="341" width="1" height="2.4" fill="rgb(159,180,212)" opacity="0.21"/><rect x="518" y="404" width="1" height="2.8" fill="rgb(221,209,198)" opacity="0.27"/><rect x="371" y="308" width="1" height="1.6" fill="rgb(172,190,216)" opacity="0.24"/><rect x="506" y="458" width="1" height="2.8" fill="rgb(224,224,224)" opacity="0.23"/><rect x="551" y="477" width="1" height="2.8" fill="rgb(211,211,211)" opacity="0.32"/><rect x="464" y="373" width="1" height="1.6" fill="rgb(175,175,175)" opacity="0.38"/><rect x="571" y="428" width="1" height="2.8" fill="rgb(187,187,187)" opacity="0.30"/><rect x="477" y="340" width="1" height="2.4" fill="rgb(235,223,211)" opacity="0.16"/><rect x="475" y="293" width="1" height="1.6" fill="rgb(129,147,173)" opacity="0.19"/><rect x="410" y="355" width="1" height="2.4" fill="rgb(148,162,185)" opacity="0.23"/><rect x="541" y="297" width="1" height="2.8" fill="rgb(130,143,163)" opacity="0.30"/><rect x="471" y="319" width="1" height="1.6" fill="rgb(175,166,157)" opacity="0.16"/><rect x="485" y="371" width="1" height="2.8" fill="rgb(127,139,159)" opacity="0.14"/><rect x="575" y="414" width="1" height="2.8" fill="rgb(209,198,188)" opacity="0.22"/><rect x="617" y="466" width="1" height="2.0" fill="rgb(204,193,183)" opacity="0.20"/><rect x="622" y="413" width="1" height="2.8" fill="rgb(176,167,158)" opacity="0.13"/><rect x="521" y="465" width="1" height="2.8" fill="rgb(152,167,190)" opacity="0.28"/><rect x="375" y="328" width="1" height="2.4" fill="rgb(128,145,171)" opacity="0.40"/><rect x="419" y="330" width="1" height="1.6" fill="rgb(230,230,230)" opacity="0.28"/><rect x="521" y="357" width="1" height="2.0" fill="rgb(134,147,168)" opacity="0.34"/><rect x="520" y="437" width="1" height="2.4" fill="rgb(156,176,208)" opacity="0.37"/><rect x="497" y="298" width="1" height="2.0" fill="rgb(204,193,183)" opacity="0.37"/><rect x="421" y="354" width="1" height="2.8" fill="rgb(152,172,203)" opacity="0.39"/><rect x="436" y="414" width="1" height="2.0" fill="rgb(237,237,237)" opacity="0.25"/><rect x="577" y="422" width="1" height="2.8" fill="rgb(172,190,216)" opacity="0.32"/><rect x="417" y="344" width="1" height="2.0" fill="rgb(125,141,167)" opacity="0.16"/><rect x="368" y="422" width="1" height="1.6" fill="rgb(238,226,214)" opacity="0.38"/><rect x="410" y="295" width="1" height="2.0" fill="rgb(165,187,220)" opacity="0.23"/><rect x="545" y="436" width="1" height="2.0" fill="rgb(152,172,203)" opacity="0.26"/><rect x="555" y="423" width="1" height="1.6" fill="rgb(224,212,201)" opacity="0.39"/><rect x="592" y="463" width="1" height="2.8" fill="rgb(181,181,181)" opacity="0.21"/><rect x="418" y="351" width="1" height="2.8" fill="rgb(121,137,162)" opacity="0.18"/><rect x="578" y="331" width="1" height="2.8" fill="rgb(158,174,198)" opacity="0.37"/><rect x="426" y="384" width="1" height="1.6" fill="rgb(186,205,233)" opacity="0.30"/><rect x="532" y="362" width="1" height="2.4" fill="rgb(139,153,174)" opacity="0.15"/><rect x="464" y="346" width="1" height="2.4" fill="rgb(173,164,155)" opacity="0.13"/><rect x="624" y="298" width="1" height="2.4" fill="rgb(175,192,219)" opacity="0.23"/><rect x="422" y="335" width="1" height="2.4" fill="rgb(202,191,181)" opacity="0.12"/><rect x="447" y="294" width="1" height="2.0" fill="rgb(214,203,192)" opacity="0.37"/><rect x="455" y="475" width="1" height="2.8" fill="rgb(130,143,163)" opacity="0.18"/><rect x="355" y="370" width="1" height="1.6" fill="rgb(213,202,191)" opacity="0.20"/><rect x="500" y="425" width="1" height="2.0" fill="rgb(191,210,239)" opacity="0.24"/><rect x="476" y="451" width="1" height="2.4" fill="rgb(171,193,228)" opacity="0.27"/><rect x="597" y="427" width="1" height="2.8" fill="rgb(208,197,187)" opacity="0.25"/><rect x="387" y="444" width="1" height="2.0" fill="rgb(183,201,229)" opacity="0.31"/><rect x="415" y="333" width="1" height="2.8" fill="rgb(155,155,155)" opacity="0.32"/><rect x="527" y="380" width="1" height="2.0" fill="rgb(190,180,171)" opacity="0.25"/><rect x="351" y="371" width="1" height="2.4" fill="rgb(135,148,169)" opacity="0.15"/><rect x="378" y="328" width="1" height="1.6" fill="rgb(141,155,177)" opacity="0.41"/><rect x="607" y="357" width="1" height="2.4" fill="rgb(171,188,214)" opacity="0.33"/><rect x="520" y="347" width="1" height="2.0" fill="rgb(132,146,166)" opacity="0.15"/><rect x="676" y="302" width="1" height="2.4" fill="rgb(214,203,192)" opacity="0.25"/><rect x="518" y="299" width="1" height="1.6" fill="rgb(178,196,223)" opacity="0.35"/><rect x="505" y="405" width="1" height="2.0" fill="rgb(205,205,205)" opacity="0.42"/><rect x="552" y="382" width="1" height="1.6" fill="rgb(181,171,162)" opacity="0.14"/><rect x="560" y="394" width="1" height="2.8" fill="rgb(169,169,169)" opacity="0.12"/><rect x="662" y="409" width="1" height="2.4" fill="rgb(211,200,189)" opacity="0.26"/><rect x="549" y="403" width="1" height="1.6" fill="rgb(159,180,212)" opacity="0.25"/><rect x="630" y="459" width="1" height="1.6" fill="rgb(123,140,165)" opacity="0.39"/><rect x="350" y="402" width="1" height="2.4" fill="rgb(126,143,169)" opacity="0.37"/><rect x="612" y="310" width="1" height="1.6" fill="rgb(228,228,228)" opacity="0.22"/><rect x="610" y="339" width="1" height="1.6" fill="rgb(148,163,186)" opacity="0.25"/><rect x="617" y="352" width="1" height="2.0" fill="rgb(233,221,209)" opacity="0.29"/><rect x="659" y="304" width="1" height="2.4" fill="rgb(180,171,162)" opacity="0.39"/><rect x="604" y="328" width="1" height="2.4" fill="rgb(222,210,199)" opacity="0.18"/><rect x="654" y="351" width="1" height="1.6" fill="rgb(176,176,176)" opacity="0.24"/><rect x="504" y="295" width="1" height="2.4" fill="rgb(124,141,166)" opacity="0.15"/><rect x="503" y="295" width="1" height="2.0" fill="rgb(176,199,235)" opacity="0.31"/><rect x="651" y="321" width="1" height="2.0" fill="rgb(153,145,137)" opacity="0.13"/><rect x="637" y="316" width="1" height="2.8" fill="rgb(161,182,215)" opacity="0.40"/><rect x="669" y="353" width="1" height="2.8" fill="rgb(115,130,154)" opacity="0.28"/><rect x="367" y="440" width="1" height="2.0" fill="rgb(233,221,209)" opacity="0.29"/><rect x="566" y="470" width="1" height="2.8" fill="rgb(165,187,221)" opacity="0.15"/><rect x="554" y="433" width="1" height="2.0" fill="rgb(123,135,154)" opacity="0.19"/><rect x="495" y="386" width="1" height="2.0" fill="rgb(121,133,152)" opacity="0.26"/><rect x="520" y="438" width="1" height="2.0" fill="rgb(180,204,240)" opacity="0.38"/><rect x="629" y="381" width="1" height="1.6" fill="rgb(186,176,167)" opacity="0.28"/><rect x="360" y="340" width="1" height="1.6" fill="rgb(226,226,226)" opacity="0.21"/><rect x="519" y="365" width="1" height="2.4" fill="rgb(214,214,214)" opacity="0.41"/><rect x="666" y="335" width="1" height="2.4" fill="rgb(151,151,151)" opacity="0.32"/><rect x="548" y="389" width="1" height="2.8" fill="rgb(207,207,207)" opacity="0.28"/><rect x="640" y="448" width="1" height="2.0" fill="rgb(155,175,207)" opacity="0.18"/><rect x="602" y="349" width="1" height="2.4" fill="rgb(169,192,226)" opacity="0.21"/><rect x="527" y="399" width="1" height="2.4" fill="rgb(189,189,189)" opacity="0.39"/><rect x="450" y="464" width="1" height="2.4" fill="rgb(221,209,198)" opacity="0.16"/><rect x="369" y="467" width="1" height="2.8" fill="rgb(125,141,167)" opacity="0.28"/><rect x="510" y="436" width="1" height="2.4" fill="rgb(183,173,164)" opacity="0.31"/><rect x="525" y="403" width="1" height="2.4" fill="rgb(179,203,239)" opacity="0.23"/><rect x="670" y="394" width="1" height="2.8" fill="rgb(227,227,227)" opacity="0.35"/><rect x="557" y="473" width="1" height="2.0" fill="rgb(153,145,137)" opacity="0.39"/><rect x="668" y="451" width="1" height="2.4" fill="rgb(186,176,167)" opacity="0.38"/><rect x="480" y="295" width="1" height="2.0" fill="rgb(217,206,195)" opacity="0.34"/><rect x="618" y="416" width="1" height="2.0" fill="rgb(221,209,198)" opacity="0.18"/><rect x="475" y="394" width="1" height="2.0" fill="rgb(200,190,180)" opacity="0.14"/><rect x="572" y="367" width="1" height="2.8" fill="rgb(191,191,191)" opacity="0.25"/><rect x="446" y="350" width="1" height="2.4" fill="rgb(135,153,181)" opacity="0.21"/><rect x="590" y="465" width="1" height="2.4" fill="rgb(114,130,153)" opacity="0.18"/><rect x="640" y="436" width="1" height="2.0" fill="rgb(239,227,215)" opacity="0.38"/><rect x="678" y="300" width="1" height="2.8" fill="rgb(217,206,195)" opacity="0.18"/><rect x="600" y="327" width="1" height="1.6" fill="rgb(205,194,184)" opacity="0.37"/><rect x="375" y="306" width="1" height="2.4" fill="rgb(188,178,169)" opacity="0.40"/><rect x="408" y="394" width="1" height="1.6" fill="rgb(205,205,205)" opacity="0.16"/><rect x="408" y="439" width="1" height="2.8" fill="rgb(207,207,207)" opacity="0.39"/><rect x="568" y="404" width="1" height="2.8" fill="rgb(119,135,159)" opacity="0.24"/><rect x="550" y="367" width="1" height="1.6" fill="rgb(120,132,151)" opacity="0.18"/><rect x="654" y="303" width="1" height="2.8" fill="rgb(224,212,201)" opacity="0.18"/><rect x="464" y="429" width="1" height="2.8" fill="rgb(131,148,175)" opacity="0.13"/><rect x="484" y="372" width="1" height="2.0" fill="rgb(150,170,200)" opacity="0.27"/><rect x="519" y="329" width="1" height="2.4" fill="rgb(193,193,193)" opacity="0.24"/><rect x="358" y="461" width="1" height="2.0" fill="rgb(131,144,164)" opacity="0.38"/><rect x="491" y="311" width="1" height="1.6" fill="rgb(123,139,164)" opacity="0.37"/><rect x="447" y="343" width="1" height="2.4" fill="rgb(140,154,176)" opacity="0.14"/><rect x="405" y="453" width="1" height="1.6" fill="rgb(149,169,199)" opacity="0.24"/><rect x="352" y="351" width="1" height="2.4" fill="rgb(189,179,170)" opacity="0.24"/><rect x="629" y="333" width="1" height="2.0" fill="rgb(230,218,207)" opacity="0.17"/><rect x="554" y="315" width="1" height="2.0" fill="rgb(209,198,188)" opacity="0.20"/><rect x="589" y="458" width="1" height="2.0" fill="rgb(213,213,213)" opacity="0.20"/><rect x="439" y="300" width="1" height="1.6" fill="rgb(230,230,230)" opacity="0.33"/><rect x="374" y="297" width="1" height="2.4" fill="rgb(173,173,173)" opacity="0.22"/><rect x="371" y="382" width="1" height="2.8" fill="rgb(192,211,240)" opacity="0.15"/><rect x="657" y="338" width="1" height="2.0" fill="rgb(202,202,202)" opacity="0.19"/><rect x="423" y="375" width="1" height="2.0" fill="rgb(164,180,205)" opacity="0.25"/><rect x="674" y="435" width="1" height="2.8" fill="rgb(148,162,185)" opacity="0.29"/><rect x="474" y="332" width="1" height="2.8" fill="rgb(163,154,146)" opacity="0.19"/><rect x="355" y="479" width="1" height="2.0" fill="rgb(169,186,212)" opacity="0.33"/><rect x="466" y="304" width="1" height="2.0" fill="rgb(112,127,150)" opacity="0.18"/><rect x="440" y="327" width="1" height="2.8" fill="rgb(114,130,153)" opacity="0.32"/><rect x="665" y="401" width="1" height="2.8" fill="rgb(188,207,236)" opacity="0.30"/><rect x="374" y="334" width="1" height="2.4" fill="rgb(206,206,206)" opacity="0.17"/><rect x="626" y="481" width="1" height="2.8" fill="rgb(169,192,226)" opacity="0.35"/><rect x="393" y="392" width="1" height="2.0" fill="rgb(218,207,196)" opacity="0.24"/><rect x="462" y="392" width="1" height="2.0" fill="rgb(200,200,200)" opacity="0.28"/><rect x="437" y="439" width="1" height="2.8" fill="rgb(144,159,181)" opacity="0.30"/><rect x="412" y="449" width="1" height="1.6" fill="rgb(148,168,198)" opacity="0.31"/><rect x="508" y="438" width="1" height="2.4" fill="rgb(151,143,135)" opacity="0.25"/><rect x="435" y="298" width="1" height="2.4" fill="rgb(179,203,239)" opacity="0.14"/><rect x="533" y="302" width="1" height="2.0" fill="rgb(228,216,205)" opacity="0.36"/><rect x="661" y="371" width="1" height="2.4" fill="rgb(190,190,190)" opacity="0.38"/><rect x="518" y="316" width="1" height="2.0" fill="rgb(149,164,187)" opacity="0.27"/><rect x="586" y="469" width="1" height="2.0" fill="rgb(163,179,204)" opacity="0.29"/><rect x="629" y="370" width="1" height="1.6" fill="rgb(157,178,210)" opacity="0.20"/><rect x="655" y="356" width="1" height="2.8" fill="rgb(158,158,158)" opacity="0.39"/><rect x="482" y="426" width="1" height="2.8" fill="rgb(193,183,173)" opacity="0.33"/><rect x="606" y="339" width="1" height="1.6" fill="rgb(194,184,174)" opacity="0.19"/><rect x="520" y="333" width="1" height="2.0" fill="rgb(142,161,190)" opacity="0.37"/><rect x="491" y="308" width="1" height="2.0" fill="rgb(163,179,204)" opacity="0.42"/><rect x="415" y="436" width="1" height="2.8" fill="rgb(172,189,215)" opacity="0.22"/><rect x="526" y="450" width="1" height="2.0" fill="rgb(163,185,218)" opacity="0.42"/><rect x="628" y="326" width="1" height="2.4" fill="rgb(143,162,191)" opacity="0.26"/><rect x="481" y="408" width="1" height="2.4" fill="rgb(138,152,173)" opacity="0.17"/><rect x="629" y="329" width="1" height="2.0" fill="rgb(168,190,224)" opacity="0.34"/><rect x="522" y="378" width="1" height="2.8" fill="rgb(167,183,209)" opacity="0.22"/><rect x="456" y="439" width="1" height="1.6" fill="rgb(144,164,193)" opacity="0.34"/><rect x="572" y="353" width="1" height="2.0" fill="rgb(114,130,153)" opacity="0.30"/><rect x="614" y="295" width="1" height="2.8" fill="rgb(177,177,177)" opacity="0.15"/><rect x="405" y="381" width="1" height="1.6" fill="rgb(225,213,202)" opacity="0.28"/><rect x="456" y="458" width="1" height="2.0" fill="rgb(141,155,177)" opacity="0.38"/><rect x="606" y="428" width="1" height="1.6" fill="rgb(174,191,218)" opacity="0.26"/>
  <circle cx="421" cy="332" r="9" fill="#fff" filter="url(#c4)" opacity="0.9"/>
  <path d="M421 332 L470 342" stroke="#e8d8b0" stroke-width="1.2" filter="url(#c2)"/>
  <circle cx="421" cy="332" r="3.5" fill="#fff"/>
  <circle cx="371" cy="329.5" r="47.5" fill="#fe966e"/>
  <circle cx="477" cy="316" r="43" fill="#fe966e"/>
  <!-- saturn -->
  <ellipse cx="513" cy="377" rx="32.5" ry="21" fill="#2a2b31"/>
  <ellipse cx="514" cy="376" rx="26" ry="15" fill="#15171c"/>
  <circle cx="514.4" cy="374.3" r="14.5" fill="url(#sat2)"/>
  <path d="M508 384.5 Q512 382 515 385 M518 384 Q524 379 531 380" fill="none" stroke="#111" stroke-width="1.2"/>
  <circle cx="526.6" cy="357" r="7" fill="#1f7f24"/>
  <circle cx="484.6" cy="371" r="6.5" fill="#7a58c8"/>
  <path d="M537.8 375 Q538 367.5 544 367.5 Q550 367.5 550 375Z" fill="#e05050"/>
  <rect x="543" y="374" width="1.6" height="7" fill="#c04040"/>
  <circle cx="433" cy="391.5" r="6" fill="#3a64c8"/>
  <rect x="429" y="396" width="9" height="3" fill="#5a4ac0"/>
  <circle cx="460" cy="385" r="6" fill="#7ab0c8"/>
  <path d="M458 390 L455 397 M463 390 L467 396" stroke="#6ab0d8" stroke-width="2.5"/>
  <ellipse cx="420" cy="403" rx="16" ry="8" fill="none" stroke="#9090a0" stroke-width="0.8" stroke-dasharray="1.5 2"/>
  <!-- uranus -->
  <ellipse cx="589" cy="363.5" rx="37" ry="21" fill="none" stroke="#b8b8c4" stroke-width="1" stroke-dasharray="2 1.6"/>
  <circle cx="588" cy="361" r="14.5" fill="url(#ura)"/>
  <path d="M576 358 Q588 364 600 360" stroke="#a04040" stroke-width="0.8" fill="none"/>
  <ellipse cx="591" cy="369" rx="3" ry="4" fill="#111"/><ellipse cx="598" cy="368" rx="3" ry="3.5" fill="#3a1010"/>
  <circle cx="577" cy="380" r="5.5" fill="#e0ddd4"/>
  <rect x="585" y="374" width="10" height="8" rx="3" fill="#eceae4"/>
 </g>
 <!-- cube -->
 <path d="M647.9 570L668.9 580.2L647.9 590.2L627.3 580.2Z" fill="#fff"/><path d="M627.3 582.7L646 592V615.6L626 625L605.3 614.7L627.3 604.5Z" fill="#fff"/><path d="M649.2 592L668.9 582.7V606L649.2 615.5Z" fill="#fff"/>
</svg>
</div>
<div class="t" style="left:351px;top:605.77px;font-size:20.3px;line-height:25px;font-weight:bold;color:#fff;">Render FPS: 38</div>

<!-- FRAME PANEL -->
<div class="a" style="left:680px;top:113px;width:380px;height:527px;background:#c8c8c8;overflow:hidden">
 <div class="a" style="left:165px;top:0;width:215px;height:28px;background:linear-gradient(#a8a8a8,#b4b4b4 4px)"></div>
 <div class="a" style="left:0;top:0;width:165px;height:4px;background:linear-gradient(#bcbcbc,#c8c8c8)"></div>
 
</div>
<div class="t" style="left:695.5px;top:119.60px;font-size:13px;line-height:16px;font-weight:bold;color:#161616;">Frame 0 for Sun Rig</div>

<svg class="a" style="left:831px;top:125px" width="8" height="8" viewBox="0 0 8 8"><path d="M1 1L7 7M7 1L1 7" stroke="#111" stroke-width="2"/></svg>
<div class="t" style="left:695px;top:148.22px;font-size:13.5px;line-height:17px;color:#2a2a2a;">Y:</div>

<div class="t" style="left:726px;top:148.22px;font-size:13.5px;line-height:17px;color:#2a2a2a;">0</div>

<div class="t" style="left:695px;top:173.72px;font-size:13.5px;line-height:17px;color:#2a2a2a;">Z:</div>

<div class="t" style="left:726px;top:173.72px;font-size:13.5px;line-height:17px;color:#2a2a2a;">0</div>

<!-- icon defs -->
<svg width="0" height="0" style="position:absolute">
 <defs>
  <g id="i-undo"><path d="M0 4.5L5 0V2.7Q11 2.7 12 9Q9.5 6.2 5 6.3V9Z" fill="#111"/></g>
  <g id="i-copy"><path d="M0 1.2Q0 0 1.2 0H6.2L8.6 2.6H3.4V11.6Q3.4 12.8 2.2 12.8H1.2Q0 12.8 0 11.6Z" fill="#111"/><path d="M5 5.4Q5 4.2 6.2 4.2H11L14.8 8V15.6Q14.8 16.8 13.6 16.8H6.2Q5 16.8 5 15.6Z" fill="#111"/><path d="M11.2 5V7.8H14Z" fill="#d0d0d0"/></g>
  <g id="i-paste"><path d="M0.2 3.2Q0.2 2 1.4 2H3V1.5Q3 0 5.4 0Q7.8 0 7.8 1.5V2H9.6Q10.8 2 10.8 3.2V4.6H2.4V13.6H4.7V15.8H1.4Q0.2 15.8 0.2 14.6Z" fill="#111"/><path d="M6.2 7.4Q6.2 6.2 7.4 6.2H12L16 10V17.7Q16 18.9 14.8 18.9H7.4Q6.2 18.9 6.2 17.7Z" fill="#111"/><path d="M12.2 7V9.8H15Z" fill="#d0d0d0"/></g>
  <g id="i-grid"><rect x="0" y="0" width="10" height="10" rx="1" fill="#111"/><g fill="#c8c8c8"><rect x="1.2" y="1.2" width="1.8" height="1.8"/><rect x="4.1" y="1.2" width="1.8" height="1.8"/><rect x="7" y="1.2" width="1.8" height="1.8"/><rect x="1.2" y="4.1" width="1.8" height="1.8"/><rect x="4.1" y="4.1" width="1.8" height="1.8"/><rect x="7" y="4.1" width="1.8" height="1.8"/><rect x="1.2" y="7" width="1.8" height="1.8"/><rect x="4.1" y="7" width="1.8" height="1.8"/><rect x="7" y="7" width="1.8" height="1.8"/></g></g>
  <g id="i-chk"><rect x="0" y="0" width="16" height="16" rx="2" fill="#4366a4"/><path d="M3.9 6.3L8 10.3L12.1 6.3" fill="none" stroke="#fff" stroke-width="2.3"/></g>
 </defs>
</svg>
<svg class="a" style="left:701px;top:206px" width="13" height="10"><use href="#i-undo"/></svg>
<svg class="a" style="left:724px;top:202px" width="16" height="18"><use href="#i-copy"/></svg>
<svg class="a" style="left:749px;top:201px" width="17" height="20"><use href="#i-paste"/></svg>
<svg class="a" style="left:777px;top:206px" width="10" height="10"><use href="#i-grid"/></svg>

<svg class="a" style="left:692px;top:241px" width="16" height="16"><use href="#i-chk"/></svg>
<div class="t" style="left:713.4px;top:239.92px;font-size:13.5px;line-height:17px;color:#1e1e1e;">Rotation</div>

<!-- rotation dials -->
<svg class="a" style="left:700px;top:265px" width="320" height="100" viewBox="700 265 320 100">
 <circle cx="750" cy="315" r="40" fill="#b4b4b4"/>
 <circle cx="855" cy="315" r="40" fill="#b4b4b4"/>
 <circle cx="960" cy="315" r="40" fill="#b4b4b4"/>
 <path d="M750 315H790" stroke="#f5ee00" stroke-width="2.2"/><circle cx="750" cy="315" r="4" fill="#f5ee00"/><circle cx="790" cy="315" r="3" fill="#f5ee00"/>
 <path d="M855 315H895" stroke="#0000ee" stroke-width="2.2"/><circle cx="855" cy="315" r="4" fill="#0000ee"/><circle cx="895" cy="315" r="3" fill="#0000ee"/>
 <path d="M960 315H1000" stroke="#ee0000" stroke-width="2.2"/><circle cx="960" cy="315" r="4" fill="#ee0000"/><circle cx="1000" cy="315" r="3" fill="#ee0000"/>
</svg>
<div class="t" style="left:731px;top:292.62px;font-size:13.5px;line-height:17px;color:#1e1e1e;">X: 0°</div>

<div class="t" style="left:837px;top:292.62px;font-size:13.5px;line-height:17px;color:#1e1e1e;">Y: 0°</div>

<div class="t" style="left:941.5px;top:292.62px;font-size:13.5px;line-height:17px;color:#1e1e1e;">Z: 0°</div>

<svg class="a" style="left:701px;top:381px" width="13" height="10"><use href="#i-undo"/></svg>
<svg class="a" style="left:725px;top:379px" width="14" height="12" viewBox="0 0 14 12"><path d="M3.2 6A4.6 4.6 0 1 0 5 2.2" fill="none" stroke="#111" stroke-width="2"/><path d="M0.5 2.5H6.5V8.5Z" fill="#111" transform="rotate(-10 3 5)"/></svg>
<svg class="a" style="left:749px;top:376px" width="16" height="18"><use href="#i-copy"/></svg>
<svg class="a" style="left:774px;top:375px" width="17" height="20"><use href="#i-paste"/></svg>
<svg class="a" style="left:802px;top:380px" width="10" height="10"><use href="#i-grid"/></svg>

<svg class="a" style="left:692px;top:415px" width="16" height="16"><use href="#i-chk"/></svg>
<div class="t" style="left:713.3px;top:413.72px;font-size:13.5px;line-height:17px;color:#1e1e1e;">Scale</div>

<div class="t" style="left:695px;top:439.62px;font-size:13.5px;line-height:17px;color:#2a2a2a;">XYZ:</div>

<div class="t" style="left:740.8px;top:439.62px;font-size:13.5px;line-height:17px;color:#555;">1</div>

<svg class="a" style="left:701px;top:472px" width="13" height="10"><use href="#i-undo"/></svg>
<div class="a" style="left:720px;top:465px;width:24px;height:24px;background:#4366a4;border-radius:2px"></div>
<svg class="a" style="left:724px;top:469px" width="16" height="16" viewBox="0 0 16 16"><path d="M1 4H7V6H3V13H10V9H12V15H1Z" fill="#fff"/><path d="M8 1H15V8L12.5 5.5L8.5 9.5L6.5 7.5L10.5 3.5Z" fill="#fff"/><g fill="#fff"><rect x="13" y="10" width="2" height="2"/><rect x="13" y="13" width="2" height="2"/><rect x="4" y="1" width="2" height="2"/><rect x="1" y="1" width="2" height="2"/></g></svg>
<svg class="a" style="left:749px;top:468px" width="16" height="18"><use href="#i-copy"/></svg>
<svg class="a" style="left:774px;top:467px" width="17" height="20"><use href="#i-paste"/></svg>
<svg class="a" style="left:802px;top:472px" width="10" height="10"><use href="#i-grid"/></svg>

<svg class="a" style="left:692px;top:507px" width="16" height="16"><use href="#i-chk"/></svg>
<div class="t" style="left:713.3px;top:505.92px;font-size:13.5px;line-height:17px;color:#1e1e1e;">Color</div>

<div class="t" style="left:695px;top:537.92px;font-size:13.5px;line-height:17px;color:#2a2a2a;">Alpha:</div>

<div class="a" style="left:752px;top:544px;width:210px;height:4px;background:#4366a4;border-radius:2px"></div>
<div class="a" style="left:953px;top:540px;width:12px;height:12px;background:#4366a4;border-radius:50%"></div>
<div class="t" style="left:975px;top:537.92px;font-size:13.5px;line-height:17px;color:#2a2a2a;">100%</div>

<div class="a" style="left:695px;top:569px;width:320px;height:32px;background:#4366a4;border-radius:3px"></div>
<div class="a" style="left:814px;top:578px;width:15px;height:15px;background:#fff;border:1px solid #d8d8d8"></div>
<div class="t" style="left:836px;top:577.42px;font-size:13.5px;line-height:17px;color:#fff;">Blend color</div>

<div class="a" style="left:695px;top:609px;width:320px;height:31px;background:#4366a4;border-radius:3px 3px 0 0"></div>
<div class="a" style="left:819px;top:617px;width:16px;height:16px;background:#000"></div>
<div class="t" style="left:842px;top:617.42px;font-size:13.5px;line-height:17px;color:#fff;">Mix color</div>

<!-- scrollbar -->
<div class="a" style="left:1035px;top:151px;width:10px;height:479px;background:#b4b4b4"></div>
<div class="a" style="left:1035px;top:188px;width:10px;height:332px;background:#4366a4"></div>
<!-- PROPS PANEL -->
<div class="a" style="left:1060px;top:113px;width:380px;height:724px;background:#c8c8c8"></div>
<div class="a" style="left:1055px;top:141px;width:4px;height:499px;background:linear-gradient(90deg,rgba(0,0,0,0),rgba(0,0,0,0.05))"></div><div class="a" style="left:1059px;top:113px;width:1px;height:724px;background:#b4b4b4"></div>
<div class="a" style="left:1061px;top:113px;width:126px;height:28px;background:linear-gradient(#acacac,#b9b9b9 4px)"></div>
<div class="a" style="left:1346px;top:113px;width:94px;height:28px;background:linear-gradient(#a8a8a8,#b4b4b4 4px)"></div>
<div class="a" style="left:1187px;top:113px;width:159px;height:4px;background:linear-gradient(#bcbcbc,#c8c8c8)"></div>
<div class="t" style="left:1070.4px;top:118.92px;font-size:13.5px;line-height:17px;color:#222;">Project properties</div>

<div class="t" style="left:1202px;top:119.60px;font-size:13px;line-height:16px;font-weight:bold;color:#161616;">Sun Rig properties</div>

<svg class="a" style="left:1331px;top:125px" width="8" height="8" viewBox="0 0 8 8"><path d="M1 1L7 7M7 1L1 7" stroke="#111" stroke-width="2"/></svg>
<svg class="a" style="left:1072px;top:151px" width="16" height="16"><use href="#i-chk"/></svg>
<div class="t" style="left:1093px;top:150.32px;font-size:13.5px;line-height:17px;color:#1e1e1e;">Info</div>

<div class="t" style="left:1075.2px;top:178.32px;font-size:13.5px;line-height:17px;color:#2a2a2a;">Name:</div>

<div class="a" style="left:1134px;top:175px;width:291px;height:22px;background:#fff"></div>
<div class="t" style="left:1135px;top:178.32px;font-size:13.5px;line-height:17px;color:#111;">Sun Rig</div>

<div class="t" style="left:1075.2px;top:206.32px;font-size:13.5px;line-height:17px;color:#2a2a2a;">Type:</div>

<div class="t" style="left:1134px;top:206.32px;font-size:13.5px;line-height:17px;color:#2a2a2a;">Folder</div>

<div class="a" style="left:1075px;top:231px;width:16px;height:16px;background:#fff;border-radius:1px"></div>
<div class="t" style="left:1099.4px;top:230.52px;font-size:13.5px;line-height:17px;color:#1e1e1e;">Custom rotation point</div>

<svg class="a" style="left:1072px;top:265px" width="16" height="16"><use href="#i-chk"/></svg>
<div class="t" style="left:1093px;top:263.92px;font-size:13.5px;line-height:17px;color:#1e1e1e;">Hierarchy</div>

<div class="t" style="left:1075.2px;top:296.72px;font-size:13.5px;line-height:17px;color:#2a2a2a;">Parent:</div>

<div class="a" style="left:1138px;top:289px;width:287px;height:32px;background:#4366a4;border-radius:3px"></div>
<div class="t" style="left:1154.4px;top:296.92px;font-size:13.5px;line-height:17px;color:#fff;">None</div>

<svg class="a" style="left:1403px;top:300px" width="12" height="8" viewBox="0 0 12 8"><path d="M1.5 1.5L6 6L10.5 1.5" fill="none" stroke="#fff" stroke-width="2"/></svg>
<svg class="a" style="left:1076px;top:341px" width="8" height="12" viewBox="0 0 8 12"><path d="M1.5 1.5L6 6L1.5 10.5" fill="none" stroke="#111" stroke-width="2"/></svg>
<div class="t" style="left:1093px;top:337.72px;font-size:13.5px;line-height:17px;color:#1e1e1e;">Graphics</div>

<!-- TIMELINE -->
<div class="a" style="left:0;top:640px;width:1060px;height:198px;background:#b4b4b4;overflow:hidden"></div>
<div class="a" style="left:0;top:640px;width:78px;height:27px;background:#c8c8c8"></div>
<div class="a" style="left:78px;top:640px;width:242px;height:28px;background:#b4b4b4"></div>
<div class="t" style="left:10.5px;top:646.60px;font-size:13px;line-height:16px;font-weight:bold;letter-spacing:0.4px;color:#161616;">Timeline</div>

<!-- name rows -->
<div class="a" style="left:0;top:667px;width:320px;height:120px;background:#c8c8c8"></div>
<div class="a" style="left:0;top:787px;width:320px;height:24px;background:#d4d4d4"></div>
<div class="a" style="left:0;top:811px;width:320px;height:26px;background:#c8c8c8"></div><div class="a" style="left:0;top:811px;width:320px;height:2px;background:#c2c2c2"></div>
<!-- track rows -->
<div class="a" style="left:322px;top:667px;width:708px;height:24px;background:#c2c2c2"></div>
<div class="a" style="left:322px;top:691px;width:708px;height:24px;background:#bcbcbc"></div>
<div class="a" style="left:322px;top:715px;width:708px;height:24px;background:#c2c2c2"></div>
<div class="a" style="left:322px;top:739px;width:708px;height:24px;background:#bcbcbc"></div>
<div class="a" style="left:322px;top:763px;width:708px;height:24px;background:#c2c2c2"></div>
<div class="a" style="left:322px;top:787px;width:708px;height:24px;background:#d2d2d2"></div>
<div class="a" style="left:322px;top:691px;width:708px;height:1px;background:#b6b6b6"></div>
<div class="a" style="left:322px;top:715px;width:708px;height:1px;background:#b6b6b6"></div>
<div class="a" style="left:322px;top:739px;width:708px;height:1px;background:#b6b6b6"></div>
<div class="a" style="left:322px;top:763px;width:708px;height:1px;background:#b6b6b6"></div>
<div class="a" style="left:322px;top:787px;width:708px;height:1px;background:#b6b6b6"></div>
<!-- ruler -->
<div class="a" style="left:322px;top:640px;width:738px;height:27px;background:#fff"></div>
<div class="a" style="left:336px;top:665px;width:1px;height:2px;background:#111"></div>
<div class="a" style="left:352px;top:665px;width:1px;height:2px;background:#111"></div>
<div class="a" style="left:368px;top:665px;width:1px;height:2px;background:#111"></div>
<div class="a" style="left:384px;top:665px;width:1px;height:2px;background:#111"></div>
<div class="a" style="left:400px;top:661px;width:1px;height:6px;background:#111"></div>
<div class="t" style="left:400.5px;top:647.80px;font-size:13px;line-height:16px;color:#222;transform:translateX(-50%)">5</div>

<div class="a" style="left:416px;top:665px;width:1px;height:2px;background:#111"></div>
<div class="a" style="left:432px;top:665px;width:1px;height:2px;background:#111"></div>
<div class="a" style="left:448px;top:665px;width:1px;height:2px;background:#111"></div>
<div class="a" style="left:464px;top:665px;width:1px;height:2px;background:#111"></div>
<div class="a" style="left:480px;top:661px;width:1px;height:6px;background:#111"></div>
<div class="t" style="left:480.5px;top:647.80px;font-size:13px;line-height:16px;color:#222;transform:translateX(-50%)">10</div>

<div class="a" style="left:496px;top:665px;width:1px;height:2px;background:#111"></div>
<div class="a" style="left:512px;top:665px;width:1px;height:2px;background:#111"></div>
<div class="a" style="left:528px;top:665px;width:1px;height:2px;background:#111"></div>
<div class="a" style="left:544px;top:665px;width:1px;height:2px;background:#111"></div>
<div class="a" style="left:560px;top:661px;width:1px;height:6px;background:#111"></div>
<div class="t" style="left:560.5px;top:647.80px;font-size:13px;line-height:16px;color:#222;transform:translateX(-50%)">15</div>

<div class="a" style="left:576px;top:665px;width:1px;height:2px;background:#111"></div>
<div class="a" style="left:592px;top:665px;width:1px;height:2px;background:#111"></div>
<div class="a" style="left:608px;top:665px;width:1px;height:2px;background:#111"></div>
<div class="a" style="left:624px;top:665px;width:1px;height:2px;background:#111"></div>
<div class="a" style="left:640px;top:661px;width:1px;height:6px;background:#111"></div>
<div class="t" style="left:640.5px;top:647.80px;font-size:13px;line-height:16px;color:#222;transform:translateX(-50%)">20</div>

<div class="a" style="left:656px;top:665px;width:1px;height:2px;background:#111"></div>
<div class="a" style="left:672px;top:665px;width:1px;height:2px;background:#111"></div>
<div class="a" style="left:688px;top:665px;width:1px;height:2px;background:#111"></div>
<div class="a" style="left:704px;top:665px;width:1px;height:2px;background:#111"></div>
<div class="a" style="left:720px;top:661px;width:1px;height:6px;background:#111"></div>
<div class="t" style="left:720.5px;top:647.80px;font-size:13px;line-height:16px;color:#222;transform:translateX(-50%)">25</div>

<div class="a" style="left:736px;top:665px;width:1px;height:2px;background:#111"></div>
<div class="a" style="left:752px;top:665px;width:1px;height:2px;background:#111"></div>
<div class="a" style="left:768px;top:665px;width:1px;height:2px;background:#111"></div>
<div class="a" style="left:784px;top:665px;width:1px;height:2px;background:#111"></div>
<div class="a" style="left:800px;top:661px;width:1px;height:6px;background:#111"></div>
<div class="t" style="left:800.5px;top:647.80px;font-size:13px;line-height:16px;color:#222;transform:translateX(-50%)">30</div>

<div class="a" style="left:816px;top:665px;width:1px;height:2px;background:#111"></div>
<div class="a" style="left:832px;top:665px;width:1px;height:2px;background:#111"></div>
<div class="a" style="left:848px;top:665px;width:1px;height:2px;background:#111"></div>
<div class="a" style="left:864px;top:665px;width:1px;height:2px;background:#111"></div>
<div class="a" style="left:880px;top:661px;width:1px;height:6px;background:#111"></div>
<div class="t" style="left:880.5px;top:647.80px;font-size:13px;line-height:16px;color:#222;transform:translateX(-50%)">35</div>

<div class="a" style="left:896px;top:665px;width:1px;height:2px;background:#111"></div>
<div class="a" style="left:912px;top:665px;width:1px;height:2px;background:#111"></div>
<div class="a" style="left:928px;top:665px;width:1px;height:2px;background:#111"></div>
<div class="a" style="left:944px;top:665px;width:1px;height:2px;background:#111"></div>
<div class="a" style="left:960px;top:661px;width:1px;height:6px;background:#111"></div>
<div class="t" style="left:960.5px;top:647.80px;font-size:13px;line-height:16px;color:#222;transform:translateX(-50%)">40</div>

<div class="a" style="left:976px;top:665px;width:1px;height:2px;background:#111"></div>
<div class="a" style="left:992px;top:665px;width:1px;height:2px;background:#111"></div>
<div class="a" style="left:1008px;top:665px;width:1px;height:2px;background:#111"></div>
<div class="a" style="left:1024px;top:665px;width:1px;height:2px;background:#111"></div>
<div class="a" style="left:1040px;top:661px;width:1px;height:6px;background:#111"></div>
<div class="t" style="left:1040.5px;top:647.80px;font-size:13px;line-height:16px;color:#222;transform:translateX(-50%)">45</div>

<div class="a" style="left:1056px;top:665px;width:1px;height:2px;background:#111"></div>
<div class="t" style="left:321.7px;top:647.80px;font-size:13px;line-height:16px;color:#222;">0</div>

<!-- markers -->
<div class="a" style="left:512px;top:661px;width:1px;height:176px;background:#6a84b8"></div>
<div class="a" style="left:704px;top:661px;width:1px;height:176px;background:#6a84b8"></div>
<div class="a" style="left:896px;top:661px;width:1px;height:176px;background:#6a84b8"></div>
<!-- playhead -->
<div class="a" style="left:320px;top:640px;width:2px;height:198px;background:#000"></div>
<svg class="a" style="left:320px;top:640px" width="10" height="10" viewBox="0 0 10 10"><path d="M0 0H9L0 8Z" fill="#000"/></svg>
<!-- keyframes -->
<svg class="a" style="left:322px;top:697px" width="8" height="13" viewBox="0 0 8 13"><path d="M0 0L6.5 6.5L0 13Z" fill="#8c7418"/></svg>
<svg class="a" style="left:322px;top:721px" width="8" height="13" viewBox="0 0 8 13"><path d="M0 0L6.5 6.5L0 13Z" fill="#0c9a0c"/></svg>
<svg class="a" style="left:322px;top:769px" width="8" height="13" viewBox="0 0 8 13"><path d="M0 0L6.5 6.5L0 13Z" fill="#a0101c"/></svg>
<!-- timeline scrollbar -->
<div class="a" style="left:1030px;top:667px;width:30px;height:170px;background:#b4b4b4"></div>
<div class="a" style="left:1040px;top:678px;width:10px;height:123px;background:#a4a4a4"></div>
<div class="a" style="left:1040px;top:744px;width:10px;height:57px;background:#4366a4"></div>

<svg class="a" style="left:5px;top:676px" width="5" height="7" viewBox="0 0 5 7"><path d="M1 1L3.8 3.5L1 6" fill="none" stroke="#111" stroke-width="1.6"/></svg>
<div class="t" style="left:15px;top:673.00px;font-size:13px;line-height:16px;color:#1a1a1a;">Saturn Rig</div>

<svg class="a" style="left:5px;top:700px" width="5" height="7" viewBox="0 0 5 7"><path d="M1 1L3.8 3.5L1 6" fill="none" stroke="#111" stroke-width="1.6"/></svg>
<div class="t" style="left:15px;top:697.00px;font-size:13px;line-height:16px;color:#1a1a1a;">Jupiter Rig</div>

<svg class="a" style="left:5px;top:724px" width="5" height="7" viewBox="0 0 5 7"><path d="M1 1L3.8 3.5L1 6" fill="none" stroke="#111" stroke-width="1.6"/></svg>
<div class="t" style="left:15px;top:721.00px;font-size:13px;line-height:16px;color:#1a1a1a;">Luna Rig</div>

<svg class="a" style="left:5px;top:748px" width="5" height="7" viewBox="0 0 5 7"><path d="M1 1L3.8 3.5L1 6" fill="none" stroke="#111" stroke-width="1.6"/></svg>
<div class="t" style="left:15px;top:745.00px;font-size:13px;line-height:16px;color:#1a1a1a;">Pluto Rig</div>

<svg class="a" style="left:5px;top:772px" width="5" height="7" viewBox="0 0 5 7"><path d="M1 1L3.8 3.5L1 6" fill="none" stroke="#111" stroke-width="1.6"/></svg>
<div class="t" style="left:15px;top:769.00px;font-size:13px;line-height:16px;color:#1a1a1a;">Eris Rig</div>

<svg class="a" style="left:5px;top:796px" width="5" height="7" viewBox="0 0 5 7"><path d="M1 1L3.8 3.5L1 6" fill="none" stroke="#111" stroke-width="1.6"/></svg>
<div class="t" style="left:15px;top:793.00px;font-size:13px;line-height:16px;font-weight:bold;color:#1a1a1a;">Sun Rig</div>

</body></html>
